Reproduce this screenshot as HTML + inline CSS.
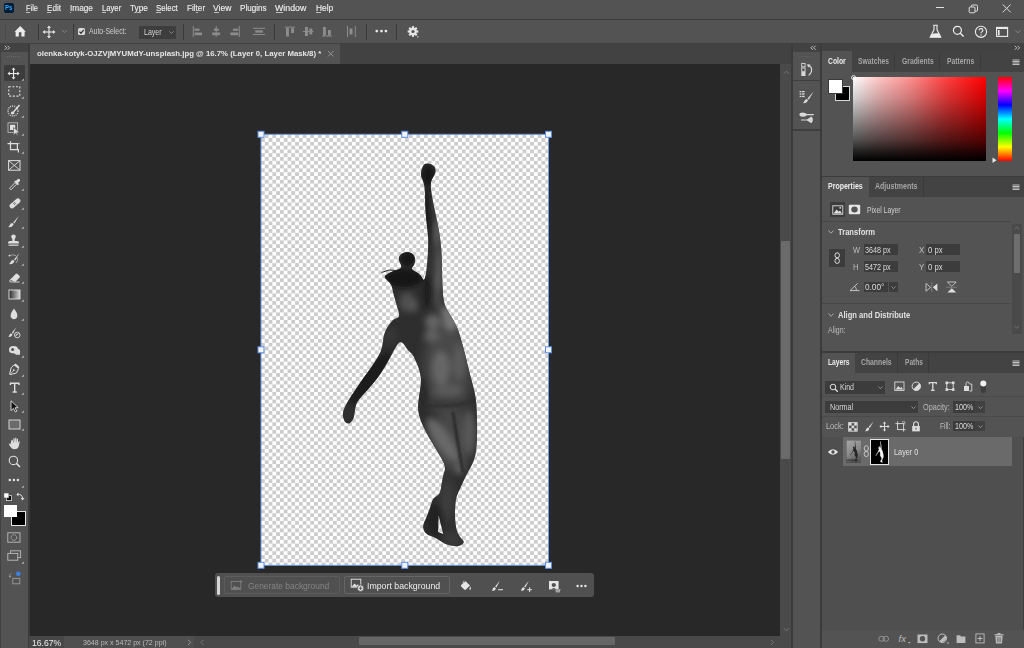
<!DOCTYPE html>
<html><head><meta charset="utf-8"><style>
html,body{margin:0;padding:0;}
body{width:1024px;height:648px;overflow:hidden;position:relative;background:#535353;font-family:"Liberation Sans",sans-serif;}
.a{position:absolute;}
.t{white-space:nowrap;}
</style></head><body>
<div class="a" style="left:0px;top:0px;width:1024px;height:19px;background:#535353;"></div>
<div class="a" style="left:0px;top:19px;width:1024px;height:1px;background:#3b3b3b;"></div>
<div class="a" style="left:0px;top:20px;width:1024px;height:23px;background:#535353;"></div>
<div class="a" style="left:0px;top:43px;width:1024px;height:605px;background:#424242;"></div>
<div class="a" style="left:0px;top:43px;width:28px;height:9px;background:#424242;"></div>
<div class="a" style="left:1px;top:52px;width:27px;height:596px;background:#535353;"></div>
<div class="a" style="left:28px;top:43px;width:2px;height:605px;background:#3b3b3b;"></div>
<div class="a" style="left:30px;top:43px;width:762px;height:21px;background:#424242;"></div>
<div class="a" style="left:30px;top:44px;width:310px;height:20px;background:#535353;"></div>
<div class="a" style="left:30px;top:64px;width:750px;height:572px;background:#282828;"></div>
<div class="a" style="left:780px;top:64px;width:11.3px;height:584px;background:#4a4a4a;"></div>
<div class="a" style="left:30px;top:636px;width:750px;height:12px;background:#474747;"></div>
<div class="a" style="left:791px;top:43px;width:2px;height:605px;background:#3b3b3b;"></div>
<div class="a" style="left:793px;top:43px;width:27px;height:9px;background:#424242;"></div>
<div class="a" style="left:793px;top:52px;width:27px;height:596px;background:#535353;"></div>
<div class="a" style="left:820px;top:43px;width:2px;height:605px;background:#3b3b3b;"></div>
<div class="a" style="left:822px;top:43px;width:202px;height:8px;background:#424242;"></div>
<div class="a" style="left:4px;top:3px;width:10px;height:10px;background:#001e36;border-radius:2px;"></div>
<div class="a t" style="left:5.3px;top:5.10px;font-size:6.5px;line-height:6.5px;color:#31a8ff;font-weight:bold;transform:scaleX(0.9433);transform-origin:0 0;">Ps</div>
<div class="a t" style="left:25.5px;top:3.16px;font-size:9.5px;line-height:9.5px;color:#ececec;transform:scaleX(0.7839);transform-origin:0 0;-webkit-text-stroke:0.15px #ececec;">File</div>
<div class="a t" style="left:46.6px;top:3.16px;font-size:9.5px;line-height:9.5px;color:#ececec;transform:scaleX(0.8552);transform-origin:0 0;-webkit-text-stroke:0.15px #ececec;">Edit</div>
<div class="a t" style="left:69.7px;top:3.16px;font-size:9.5px;line-height:9.5px;color:#ececec;transform:scaleX(0.8673);transform-origin:0 0;-webkit-text-stroke:0.15px #ececec;">Image</div>
<div class="a t" style="left:101.6px;top:3.16px;font-size:9.5px;line-height:9.5px;color:#ececec;transform:scaleX(0.8079);transform-origin:0 0;-webkit-text-stroke:0.15px #ececec;">Layer</div>
<div class="a t" style="left:130px;top:3.16px;font-size:9.5px;line-height:9.5px;color:#ececec;transform:scaleX(0.8642);transform-origin:0 0;-webkit-text-stroke:0.15px #ececec;">Type</div>
<div class="a t" style="left:156px;top:3.16px;font-size:9.5px;line-height:9.5px;color:#ececec;transform:scaleX(0.8256);transform-origin:0 0;-webkit-text-stroke:0.15px #ececec;">Select</div>
<div class="a t" style="left:186.6px;top:3.16px;font-size:9.5px;line-height:9.5px;color:#ececec;transform:scaleX(0.8574);transform-origin:0 0;-webkit-text-stroke:0.15px #ececec;">Filter</div>
<div class="a t" style="left:213.3px;top:3.16px;font-size:9.5px;line-height:9.5px;color:#ececec;transform:scaleX(0.8962);transform-origin:0 0;-webkit-text-stroke:0.15px #ececec;">View</div>
<div class="a t" style="left:240.2px;top:3.16px;font-size:9.5px;line-height:9.5px;color:#ececec;transform:scaleX(0.8505);transform-origin:0 0;-webkit-text-stroke:0.15px #ececec;">Plugins</div>
<div class="a t" style="left:275.3px;top:3.16px;font-size:9.5px;line-height:9.5px;color:#ececec;transform:scaleX(0.9263);transform-origin:0 0;-webkit-text-stroke:0.15px #ececec;">Window</div>
<div class="a t" style="left:315.6px;top:3.16px;font-size:9.5px;line-height:9.5px;color:#ececec;transform:scaleX(0.8803);transform-origin:0 0;-webkit-text-stroke:0.15px #ececec;">Help</div>
<div class="a" style="left:25.8px;top:12.4px;width:4.2px;height:0.8px;background:#bdbdbd;"></div>
<div class="a" style="left:46.9px;top:12.4px;width:4.3px;height:0.8px;background:#bdbdbd;"></div>
<div class="a" style="left:69.9px;top:12.4px;width:1.6px;height:0.8px;background:#bdbdbd;"></div>
<div class="a" style="left:101.9px;top:12.4px;width:4.2px;height:0.8px;background:#bdbdbd;"></div>
<div class="a" style="left:136.5px;top:12.4px;width:4.3px;height:0.8px;background:#bdbdbd;"></div>
<div class="a" style="left:156.3px;top:12.4px;width:4.6px;height:0.8px;background:#bdbdbd;"></div>
<div class="a" style="left:195.6px;top:12.4px;width:2.8px;height:0.8px;background:#bdbdbd;"></div>
<div class="a" style="left:213.5px;top:12.4px;width:5.2px;height:0.8px;background:#bdbdbd;"></div>
<div class="a" style="left:275.5px;top:12.4px;width:7.6px;height:0.8px;background:#bdbdbd;"></div>
<div class="a" style="left:315.9px;top:12.4px;width:5px;height:0.8px;background:#bdbdbd;"></div>
<div class="a" style="left:4.5px;top:23px;width:1px;height:17px;background:#4a4a4a;"></div>
<div class="a" style="left:38.0px;top:23.5px;width:1px;height:16px;background:#3a3a3a;"></div>
<div class="a" style="left:72.5px;top:23.5px;width:1px;height:16px;background:#3a3a3a;"></div>
<div class="a" style="left:182.5px;top:23.5px;width:1px;height:16px;background:#3a3a3a;"></div>
<div class="a" style="left:274.2px;top:23.5px;width:1px;height:16px;background:#3a3a3a;"></div>
<div class="a" style="left:366.0px;top:23.5px;width:1px;height:16px;background:#3a3a3a;"></div>
<div class="a" style="left:396.0px;top:23.5px;width:1px;height:16px;background:#3a3a3a;"></div>
<svg class="a" style="left:13px;top:25px;" width="14" height="13" viewBox="0 0 14 13"><path d="M7.25 1 L1.6 6.7 L2.6 6.7 L2.6 11.4 L5.8 11.4 L5.8 7.3 L8.4 7.3 L8.4 11.4 L11.6 11.4 L11.6 6.7 L12.8 6.7 Z" fill="#ececec"/></svg>
<svg class="a" style="left:42px;top:24.5px;" width="14" height="14" viewBox="0 0 14 14"><g fill="#e2e2e2"><rect x="6.4" y="1.5" width="1.2" height="11"/><rect x="1.5" y="6.4" width="11" height="1.2"/><path d="M7 0.6 L9 3 L5 3Z M7 13.4 L9 11 L5 11Z M0.6 7 L3 5 L3 9Z M13.4 7 L11 5 L11 9Z"/></g></svg>
<svg class="a" style="left:62px;top:30px;" width="5" height="3" viewBox="0 0 5 3"><path d="M0.3 0.3 L2.5 2.5 L4.7 0.3" stroke="#8a8a8a" stroke-width="0.9" fill="none"/></svg>
<div class="a" style="left:78.4px;top:28px;width:7px;height:7px;background:#d9d9d9;border-radius:1.5px;"></div>
<svg class="a" style="left:78.4px;top:28px;" width="7" height="7" viewBox="0 0 7 7"><path d="M1.4 3.6 L3 5.2 L5.8 1.9" stroke="#333" stroke-width="1.3" fill="none"/></svg>
<div class="a t" style="left:89.3px;top:26.69px;font-size:8.4px;line-height:8.4px;color:#cfcfcf;transform:scaleX(0.8195);transform-origin:0 0;">Auto-Select:</div>
<div class="a" style="left:139px;top:26px;width:36.5px;height:12.5px;background:#3d3d3d;border-radius:1px;"></div>
<div class="a t" style="left:143.8px;top:27.80px;font-size:8.5px;line-height:8.5px;color:#d6d6d6;transform:scaleX(0.8277);transform-origin:0 0;">Layer</div>
<svg class="a" style="left:169px;top:31px;" width="5" height="3" viewBox="0 0 5 3"><path d="M0.3 0.3 L2.5 2.5 L4.7 0.3" stroke="#8a8a8a" stroke-width="0.9" fill="none"/></svg>
<svg class="a" style="left:192px;top:25px;" width="12" height="13" viewBox="0 0 12 13"><g fill="#8c8c8c"><rect x="0.8" y="1" width="1" height="11"/><rect x="2.5" y="3.6" width="5" height="2.2"/><rect x="2.5" y="7.5" width="7.6" height="2.7"/></g></svg>
<svg class="a" style="left:211px;top:25px;" width="10" height="13" viewBox="0 0 10 13"><g fill="#8c8c8c"><rect x="4.7" y="1" width="1" height="11"/><rect x="3" y="3.6" width="4.8" height="2.2"/><rect x="1.2" y="7.5" width="7.9" height="2.7"/></g></svg>
<svg class="a" style="left:229px;top:25px;" width="12" height="13" viewBox="0 0 12 13"><g fill="#8c8c8c"><rect x="9.8" y="1" width="1" height="11"/><rect x="3.9" y="3.6" width="5.4" height="2.2"/><rect x="1.3" y="7.5" width="8" height="2.7"/></g></svg>
<svg class="a" style="left:252px;top:25px;" width="14" height="13" viewBox="0 0 14 13"><g fill="#8c8c8c"><rect x="1" y="2.8" width="12" height="1"/><rect x="1" y="9" width="12" height="1"/><rect x="3.3" y="5.3" width="7.5" height="2.4"/></g></svg>
<svg class="a" style="left:284px;top:25px;" width="12" height="13" viewBox="0 0 12 13"><g fill="#8c8c8c"><rect x="1" y="1.6" width="10" height="1"/><rect x="2" y="3" width="2.9" height="8.5"/><rect x="7.1" y="3" width="2.9" height="5"/></g></svg>
<svg class="a" style="left:302px;top:25px;" width="12" height="13" viewBox="0 0 12 13"><g fill="#8c8c8c"><rect x="1" y="6" width="10.5" height="1"/><rect x="3" y="2" width="2.9" height="9"/><rect x="7.4" y="3.5" width="2.9" height="6"/></g></svg>
<svg class="a" style="left:321px;top:25px;" width="12" height="13" viewBox="0 0 12 13"><g fill="#8c8c8c"><rect x="1" y="10.5" width="10" height="1"/><rect x="2" y="2" width="2.9" height="8.5"/><rect x="7" y="5" width="2.9" height="5.5"/></g></svg>
<svg class="a" style="left:346px;top:25px;" width="10" height="13" viewBox="0 0 10 13"><g fill="#8c8c8c"><rect x="1" y="1" width="1" height="11"/><rect x="8.8" y="1" width="1" height="11"/><rect x="3.5" y="3.5" width="3" height="6"/></g></svg>
<svg class="a" style="left:374px;top:29px;" width="14" height="4" viewBox="0 0 14 4"><g fill="#e6e6e6"><circle cx="2.8" cy="2.1" r="1.4"/><circle cx="7.5" cy="2.1" r="1.4"/><circle cx="11.9" cy="2.1" r="1.4"/></g></svg>
<svg class="a" style="left:405.7px;top:24.6px;" width="14" height="13" viewBox="0 0 14 13"><g fill="#e6e6e6" transform="translate(7 6.5)"><rect x="-1.1" y="-5.3" width="2.2" height="2.6" transform="rotate(0)"/><rect x="-1.1" y="-5.3" width="2.2" height="2.6" transform="rotate(45)"/><rect x="-1.1" y="-5.3" width="2.2" height="2.6" transform="rotate(90)"/><rect x="-1.1" y="-5.3" width="2.2" height="2.6" transform="rotate(135)"/><rect x="-1.1" y="-5.3" width="2.2" height="2.6" transform="rotate(180)"/><rect x="-1.1" y="-5.3" width="2.2" height="2.6" transform="rotate(225)"/><rect x="-1.1" y="-5.3" width="2.2" height="2.6" transform="rotate(270)"/><rect x="-1.1" y="-5.3" width="2.2" height="2.6" transform="rotate(315)"/><circle r="3.7"/><circle r="1.6" fill="#535353"/></g><path d="M10.6 11.6 L13 11.6 L11.8 12.8Z" fill="#e6e6e6"/></svg>
<svg class="a" style="left:929px;top:24px;" width="13" height="15" viewBox="0 0 13 15"><path d="M4.2 1.2 H8.8 M5 1.2 V5.8 L1.2 13.2 H11.8 L8 5.8 V1.2" stroke="#ececec" stroke-width="1.1" fill="none"/><path d="M2.6 10.4 Q6 8.6 10.2 9.6 L11.8 13.2 H1.2Z" fill="#ececec"/></svg>
<svg class="a" style="left:952px;top:25px;" width="13" height="13" viewBox="0 0 13 13"><circle cx="5.4" cy="5.3" r="4" stroke="#ececec" stroke-width="1.2" fill="none"/><path d="M8.3 8.3 L11.6 11.6" stroke="#ececec" stroke-width="1.4"/></svg>
<svg class="a" style="left:974px;top:24.5px;" width="14" height="14" viewBox="0 0 14 14"><circle cx="7" cy="6.8" r="5.6" stroke="#ececec" stroke-width="1.1" fill="none"/><path d="M5.1 5.3 Q5.1 3.6 7 3.6 Q8.9 3.6 8.9 5.2 Q8.9 6.3 7.6 6.9 Q7 7.3 7 8.3" stroke="#ececec" stroke-width="1.1" fill="none"/><circle cx="7" cy="10" r="0.7" fill="#ececec"/></svg>
<svg class="a" style="left:995px;top:26px;" width="14" height="12" viewBox="0 0 14 12"><rect x="1.6" y="1.4" width="11" height="9" stroke="#ececec" stroke-width="1.1" fill="none"/><rect x="1.6" y="1.4" width="11" height="1.6" fill="#ececec"/><rect x="3" y="4" width="1.6" height="5.4" fill="#ececec"/></svg>
<svg class="a" style="left:1015px;top:30px;" width="6" height="3.5" viewBox="0 0 6 3.5"><path d="M0.5 0.5 L3 2.8 L5.5 0.5" stroke="#8a8a8a" stroke-width="0.9" fill="none"/></svg>
<div class="a" style="left:936.3px;top:7.4px;width:8px;height:1px;background:#e0e0e0;"></div>
<svg class="a" style="left:968px;top:3.5px;" width="11" height="10" viewBox="0 0 11 10"><rect x="1.2" y="3" width="5.8" height="5.8" rx="1" stroke="#e0e0e0" stroke-width="1" fill="none"/><path d="M3.2 2.9 V2.3 Q3.2 1 4.5 1 H8.2 Q9.5 1 9.5 2.3 V6 Q9.5 7.3 8.2 7.3 H7.1" stroke="#e0e0e0" stroke-width="1" fill="none"/></svg>
<svg class="a" style="left:1002px;top:3.5px;" width="10" height="9" viewBox="0 0 10 9"><path d="M0.8 0.5 L8.6 8.3 M8.6 0.5 L0.8 8.3" stroke="#e0e0e0" stroke-width="1"/></svg>
<svg class="a" style="left:4px;top:44.5px;" width="7" height="6" viewBox="0 0 7 6"><path d="M0.8 0.8 L2.8 2.8 L0.8 4.8 M3.6 0.8 L5.6 2.8 L3.6 4.8" stroke="#cfcfcf" stroke-width="0.9" fill="none"/></svg>
<div class="a" style="left:6.5px;top:55.7px;width:14px;height:1px;background:repeating-linear-gradient(90deg,#6a6a6a 0 1px,transparent 1px 2px);"></div>
<div class="a" style="left:3.7px;top:65.2px;width:21px;height:16.3px;background:#3c3c3c;border-radius:1px;"></div>
<svg class="a" style="left:7px;top:66.5px;" width="13" height="13" viewBox="0 0 13 13"><g fill="#e8e8e8"><rect x="6" y="1.6" width="1.1" height="10"/><rect x="1.6" y="6" width="10" height="1.1"/><path d="M6.55 0.5 L8.5 2.8 L4.6 2.8Z M6.55 12.6 L8.5 10.3 L4.6 10.3Z M0.5 6.55 L2.8 4.6 L2.8 8.5Z M12.6 6.55 L10.3 4.6 L10.3 8.5Z"/></g></svg>
<svg class="a" style="left:21.0px;top:78.0px;" width="3" height="3" viewBox="0 0 3 3"><path d="M2.8 0.4 L2.8 2.8 L0.4 2.8Z" fill="#bdbdbd"/></svg>
<svg class="a" style="left:7.5px;top:86px;" width="13" height="11" viewBox="0 0 13 11"><rect x="0.8" y="0.8" width="11" height="9.3" stroke="#dedede" stroke-width="1.1" stroke-dasharray="2 1.6" fill="none"/></svg>
<svg class="a" style="left:20.5px;top:96.0px;" width="3" height="3" viewBox="0 0 3 3"><path d="M2.8 0.4 L2.8 2.8 L0.4 2.8Z" fill="#bdbdbd"/></svg>
<svg class="a" style="left:7px;top:103.5px;" width="14" height="14" viewBox="0 0 14 14"><circle cx="6" cy="7" r="5" stroke="#dedede" stroke-width="1.3" stroke-dasharray="1 1" fill="none"/><path d="M12.5 1 L6.5 8" stroke="#dedede" stroke-width="1.4"/><ellipse cx="5.6" cy="9" rx="1.8" ry="1.4" fill="#dedede"/></svg>
<svg class="a" style="left:20.5px;top:114.5px;" width="3" height="3" viewBox="0 0 3 3"><path d="M2.8 0.4 L2.8 2.8 L0.4 2.8Z" fill="#bdbdbd"/></svg>
<svg class="a" style="left:7px;top:122px;" width="14" height="14" viewBox="0 0 14 14"><rect x="1" y="0.8" width="9.6" height="9.6" stroke="#dedede" stroke-width="0.8" fill="none" opacity="0.8"/><rect x="3" y="2.8" width="5.2" height="5.2" fill="#dedede"/><path d="M6.5 5.5 L6.5 13 L8.6 11.2 L10.2 13.5 L11 13 L9.6 10.8 L12.6 10.6Z" fill="#dedede" stroke="#535353" stroke-width="0.6"/></svg>
<svg class="a" style="left:20.5px;top:133.0px;" width="3" height="3" viewBox="0 0 3 3"><path d="M2.8 0.4 L2.8 2.8 L0.4 2.8Z" fill="#bdbdbd"/></svg>
<svg class="a" style="left:6.5px;top:140.5px;" width="14" height="12" viewBox="0 0 14 12"><path d="M0.5 2.6 H3.5 M3.5 0.3 V8.6 H11.4 V11.6 M3.5 2.6 H10.4 V8.6" stroke="#dedede" stroke-width="1.2" fill="none"/><path d="M10.4 2.6 H13" stroke="#dedede" stroke-width="0.6"/></svg>
<svg class="a" style="left:20.5px;top:151.0px;" width="3" height="3" viewBox="0 0 3 3"><path d="M2.8 0.4 L2.8 2.8 L0.4 2.8Z" fill="#bdbdbd"/></svg>
<svg class="a" style="left:8px;top:160px;" width="13" height="11" viewBox="0 0 13 11"><rect x="0.6" y="0.6" width="11.4" height="9.6" stroke="#dedede" stroke-width="1" fill="none"/><path d="M0.6 0.6 L12 10.2 M12 0.6 L0.6 10.2" stroke="#dedede" stroke-width="0.9"/></svg>
<svg class="a" style="left:7.5px;top:178px;" width="13" height="13" viewBox="0 0 13 13"><path d="M2.2 11.2 L1.5 10.4 L7 4.6 L8.6 6.2 L3 11.8Z" stroke="#dedede" stroke-width="0.9" fill="none"/><path d="M6.2 3.6 L9.8 7.2 L11 6 L10 5 L12 3 Q12.5 1.5 11.2 1 Q10.2 0.6 9.6 1.2 L7.8 3 L7 2.6Z" fill="#dedede"/></svg>
<svg class="a" style="left:20.5px;top:188.0px;" width="3" height="3" viewBox="0 0 3 3"><path d="M2.8 0.4 L2.8 2.8 L0.4 2.8Z" fill="#bdbdbd"/></svg>
<svg class="a" style="left:7.5px;top:196.5px;" width="13" height="12" viewBox="0 0 13 12"><rect x="-2.2" y="-1.9" width="12.6" height="5" rx="2.5" transform="translate(6.5 6) rotate(-40) translate(-4 0)" fill="#dedede"/><path d="M5.8 4.7 L8 7.2 M4.8 5.6 L7 8.1" stroke="#535353" stroke-width="0.7"/></svg>
<svg class="a" style="left:20.5px;top:206.5px;" width="3" height="3" viewBox="0 0 3 3"><path d="M2.8 0.4 L2.8 2.8 L0.4 2.8Z" fill="#bdbdbd"/></svg>
<svg class="a" style="left:7px;top:215px;" width="13" height="13" viewBox="0 0 13 13"><path d="M11.8 1 L6.2 7.4 L7.4 8.6Z" fill="#dedede"/><path d="M5.4 8 Q3.4 8.2 2.8 10 Q2.4 11.4 1 12 Q4.6 12.6 6 10.6 Q6.8 9.4 6.3 8.8Z" fill="#dedede"/></svg>
<svg class="a" style="left:20.5px;top:226.0px;" width="3" height="3" viewBox="0 0 3 3"><path d="M2.8 0.4 L2.8 2.8 L0.4 2.8Z" fill="#bdbdbd"/></svg>
<svg class="a" style="left:7px;top:233.5px;" width="13" height="13" viewBox="0 0 13 13"><circle cx="6.5" cy="2.8" r="2.3" fill="#dedede"/><rect x="5.3" y="4" width="2.4" height="3.2" fill="#dedede"/><path d="M1 8.6 Q1 7 3 7 H10 Q12 7 12 8.6 V9.6 H1Z" fill="#dedede"/><rect x="1.6" y="10.4" width="9.8" height="1.6" fill="#dedede" opacity="0.75"/></svg>
<svg class="a" style="left:20.5px;top:244.5px;" width="3" height="3" viewBox="0 0 3 3"><path d="M2.8 0.4 L2.8 2.8 L0.4 2.8Z" fill="#bdbdbd"/></svg>
<svg class="a" style="left:6.5px;top:252px;" width="14" height="13" viewBox="0 0 14 13"><path d="M12.4 1 L7 7.4 L8.2 8.6Z" fill="#dedede"/><path d="M6.2 8 Q4.2 8.2 3.6 10 Q3.2 11.4 1.8 12 Q5.4 12.6 6.8 10.6 Q7.6 9.4 7.1 8.8Z" fill="#dedede"/><path d="M1 4 L3 2.6 L3.2 4.6Z" fill="#dedede"/><path d="M2.6 3.6 Q5.6 2 9 3.6 M10.4 5.8 Q11 9 9 11" stroke="#dedede" stroke-width="0.7" fill="none" opacity="0.8"/></svg>
<svg class="a" style="left:20.5px;top:262.5px;" width="3" height="3" viewBox="0 0 3 3"><path d="M2.8 0.4 L2.8 2.8 L0.4 2.8Z" fill="#bdbdbd"/></svg>
<svg class="a" style="left:7.5px;top:271.5px;" width="13" height="11" viewBox="0 0 13 11"><path d="M2.2 7.8 L7.6 2 Q8.6 1 9.6 2 L11.4 3.8 Q12.4 4.8 11.4 5.8 L7.2 10" fill="#dedede"/><path d="M7.4 4.6 L2 8.2 Q1 9 2 9.8 L4.2 10 H11.6" stroke="#dedede" stroke-width="0.9" fill="none"/></svg>
<svg class="a" style="left:20.5px;top:280.5px;" width="3" height="3" viewBox="0 0 3 3"><path d="M2.8 0.4 L2.8 2.8 L0.4 2.8Z" fill="#bdbdbd"/></svg>
<svg class="a" style="left:7.5px;top:289px;" width="13" height="11" viewBox="0 0 13 11"><defs><linearGradient id="gr1" x1="0" x2="1" y1="0" y2="0"><stop offset="0" stop-color="#2a2a2a"/><stop offset="1" stop-color="#d8d8d8"/></linearGradient></defs><rect x="1" y="1" width="11" height="9" fill="url(#gr1)" stroke="#e0e0e0" stroke-width="0.9"/></svg>
<svg class="a" style="left:20.5px;top:298.5px;" width="3" height="3" viewBox="0 0 3 3"><path d="M2.8 0.4 L2.8 2.8 L0.4 2.8Z" fill="#bdbdbd"/></svg>
<svg class="a" style="left:9px;top:307.5px;" width="10" height="12" viewBox="0 0 10 12"><path d="M5 0.5 Q7.4 3.8 8.2 6 Q9 9 7 10.6 Q5 11.8 3 10.6 Q1 9 1.8 6 Q2.6 3.8 5 0.5Z" fill="#dedede"/></svg>
<svg class="a" style="left:20.5px;top:317.5px;" width="3" height="3" viewBox="0 0 3 3"><path d="M2.8 0.4 L2.8 2.8 L0.4 2.8Z" fill="#bdbdbd"/></svg>
<svg class="a" style="left:7.5px;top:325.5px;" width="13" height="13" viewBox="0 0 13 13"><path d="M8.4 1 L3.8 6.8 L5 7.8Z" fill="#dedede"/><path d="M3.2 7.4 Q1.8 7.6 1.4 9 Q1.2 10.2 0.4 10.8 Q3 11.2 4 9.6 Q4.6 8.6 4.2 8.1Z" fill="#dedede"/><circle cx="9.2" cy="9" r="2.8" stroke="#dedede" stroke-width="0.9" fill="none"/><path d="M7.4 10.4 L11 7.6 A2.8 2.8 0 0 0 7.4 10.4Z" fill="#dedede"/></svg>
<svg class="a" style="left:7.5px;top:344.5px;" width="13" height="11" viewBox="0 0 13 11"><path d="M1 4.5 Q1 1 5.5 1 Q9.6 1 10.2 4 L12 5 L12 9.8 L8 9.8 Q7 8 5 8.3 Q1 8.6 1 4.5Z" fill="#dedede"/><circle cx="4.6" cy="4.6" r="1.5" fill="#535353"/></svg>
<svg class="a" style="left:20.5px;top:354.5px;" width="3" height="3" viewBox="0 0 3 3"><path d="M2.8 0.4 L2.8 2.8 L0.4 2.8Z" fill="#bdbdbd"/></svg>
<svg class="a" style="left:8px;top:363px;" width="12" height="13" viewBox="0 0 12 13"><path d="M6 1.8 L10.6 5.6 L8.4 10 L2.2 11.6 L1.6 11 L3.2 4.8Z" stroke="#dedede" stroke-width="1" fill="none"/><path d="M7.6 0.6 L11.4 4 L10.6 5.6 L6 1.8Z" fill="#dedede"/><circle cx="5.8" cy="7.2" r="0.9" fill="#dedede"/><path d="M2 11.4 L5.2 8" stroke="#dedede" stroke-width="0.7"/></svg>
<svg class="a" style="left:20.5px;top:373.5px;" width="3" height="3" viewBox="0 0 3 3"><path d="M2.8 0.4 L2.8 2.8 L0.4 2.8Z" fill="#bdbdbd"/></svg>
<svg class="a" style="left:8.5px;top:382px;" width="11" height="11" viewBox="0 0 11 11"><path d="M1 1.2 H10.4 M1.4 1 V3 M10 1 V3 M5.7 1.2 V10 M3.6 10 H7.8" stroke="#dedede" stroke-width="1.4" fill="none"/></svg>
<svg class="a" style="left:20.5px;top:391.5px;" width="3" height="3" viewBox="0 0 3 3"><path d="M2.8 0.4 L2.8 2.8 L0.4 2.8Z" fill="#bdbdbd"/></svg>
<svg class="a" style="left:10px;top:399.5px;" width="9" height="13" viewBox="0 0 9 13"><path d="M1 0.8 L1 10.6 L3.4 8.4 L5.4 12 L6.8 11.3 L5 7.8 L8.2 7.6Z" fill="#111" stroke="#e0e0e0" stroke-width="0.9"/></svg>
<svg class="a" style="left:20.5px;top:410.0px;" width="3" height="3" viewBox="0 0 3 3"><path d="M2.8 0.4 L2.8 2.8 L0.4 2.8Z" fill="#bdbdbd"/></svg>
<svg class="a" style="left:7.5px;top:418.5px;" width="13" height="11" viewBox="0 0 13 11"><rect x="1" y="1" width="11" height="9" fill="#6a6a6a" stroke="#e0e0e0" stroke-width="0.9"/></svg>
<svg class="a" style="left:20.5px;top:428.0px;" width="3" height="3" viewBox="0 0 3 3"><path d="M2.8 0.4 L2.8 2.8 L0.4 2.8Z" fill="#bdbdbd"/></svg>
<svg class="a" style="left:7.5px;top:436.5px;" width="13" height="13" viewBox="0 0 13 13"><path d="M2.4 7.4 Q1.2 6 0.8 6.8 Q0.8 7.6 2.6 10 Q4 12.2 6.4 12.2 Q10 12.2 10.8 9 L11.8 4.6 Q11.6 3.8 10.8 4.2 L10 6.4 L10 2 Q9.6 1.2 9 2 L8.6 6 L8.4 1 Q7.8 0.2 7.2 1 L7 5.8 L6.6 1.6 Q6 0.8 5.4 1.6 L5.4 6.8 L4.6 3 Q4 2.4 3.5 3 Z" fill="#dedede"/></svg>
<svg class="a" style="left:7.5px;top:455px;" width="13" height="13" viewBox="0 0 13 13"><circle cx="5.4" cy="5.4" r="4.2" stroke="#dedede" stroke-width="1.1" fill="none"/><path d="M8.4 8.4 L12 12" stroke="#dedede" stroke-width="1.5"/></svg>
<svg class="a" style="left:7.5px;top:478px;" width="13" height="4" viewBox="0 0 13 4"><g fill="#dedede"><circle cx="1.8" cy="2" r="1.3"/><circle cx="5.9" cy="2" r="1.3"/><circle cx="9.9" cy="2" r="1.3"/></g></svg>
<svg class="a" style="left:20.5px;top:484.5px;" width="3" height="3" viewBox="0 0 3 3"><path d="M2.8 0.4 L2.8 2.8 L0.4 2.8Z" fill="#bdbdbd"/></svg>
<svg class="a" style="left:2.5px;top:491.5px;" width="9" height="10" viewBox="0 0 9 10"><rect x="3.4" y="3.6" width="5" height="5" fill="#000" stroke="#e0e0e0" stroke-width="0.8"/><rect x="0.9" y="1" width="5" height="5" fill="#fff" stroke="#535353" stroke-width="0.6"/></svg>
<svg class="a" style="left:15.5px;top:492px;" width="9" height="9" viewBox="0 0 9 9"><path d="M1.5 2.5 Q6 1.6 6.6 6.4" stroke="#dedede" stroke-width="1" fill="none"/><path d="M0.4 2.5 L2.4 0.6 L2.4 4.4Z M6.6 8.6 L4.7 6 L8.5 6Z" fill="#dedede"/></svg>
<div class="a" style="left:12px;top:512px;width:12.5px;height:12.5px;background:#000;box-shadow:0 0 0 1px #e6e6e6;"></div>
<div class="a" style="left:4px;top:504.6px;width:13px;height:12.6px;background:#fff;"></div>
<svg class="a" style="left:6.5px;top:532px;" width="14" height="11" viewBox="0 0 14 11"><rect x="0.8" y="0.8" width="12.2" height="9.4" stroke="#bdbdbd" stroke-width="0.9" fill="none"/><circle cx="6.9" cy="5.5" r="2.8" stroke="#bdbdbd" stroke-width="0.9" fill="none" stroke-dasharray="1.5 0.8"/></svg>
<svg class="a" style="left:6.5px;top:550px;" width="15" height="12" viewBox="0 0 15 12"><rect x="3.6" y="0.8" width="10" height="6.8" stroke="#bdbdbd" stroke-width="0.9" fill="#535353"/><rect x="0.8" y="3.4" width="10" height="6.8" stroke="#bdbdbd" stroke-width="0.9" fill="#535353"/></svg>
<svg class="a" style="left:20.5px;top:560.5px;" width="3" height="3" viewBox="0 0 3 3"><path d="M2.8 0.4 L2.8 2.8 L0.4 2.8Z" fill="#bdbdbd"/></svg>
<svg class="a" style="left:6.5px;top:571px;" width="15" height="14" viewBox="0 0 15 14"><path d="M3 6 Q2 3.4 4.2 2.4" stroke="#9a9a9a" stroke-width="0.9" fill="none"/><path d="M1.6 5 L3 6.8 L4.4 5Z" fill="#9a9a9a"/><rect x="5.8" y="7.4" width="7" height="5.4" stroke="#9a9a9a" stroke-width="0.9" fill="none"/><circle cx="11.3" cy="2.8" r="2.3" fill="#3b82e0"/></svg>
<div class="a t" style="left:37.4px;top:49.77px;font-size:7.6px;line-height:7.6px;color:#e6e6e6;font-weight:bold;transform:scaleX(1.0275);transform-origin:0 0;">olenka-kotyk-OJZVjMYUMdY-unsplash.jpg @ 16.7% (Layer 0, Layer Mask/8) *</div>
<svg class="a" style="left:326.5px;top:49.5px;" width="8" height="8" viewBox="0 0 8 8"><path d="M1 1 L6.5 6.5 M6.5 1 L1 6.5" stroke="#9a9a9a" stroke-width="0.9"/></svg>
<svg class="a" style="left:0;top:0" width="1024" height="648" viewBox="0 0 1024 648"><defs>
<pattern id="chk" x="261" y="134.3" width="7.5800" height="7.5800" patternUnits="userSpaceOnUse">
<rect width="7.5800" height="7.5800" fill="#ffffff"/><rect x="3.7900" width="3.7900" height="3.7900" fill="#cccccc"/><rect y="3.7900" width="3.7900" height="3.7900" fill="#cccccc"/>
</pattern>
<clipPath id="figclip"><path d="M425.4 163.8 Q428.1 162.7 431.6 164.6 Q435.1 166.6 435.5 169.3 Q435.9 172.0 434.7 174.3 Q433.5 176.6 432.0 179.3 Q430.5 182.0 430.9 187.8 Q431.4 193.6 433.4 203.6 Q435.5 213.6 437.0 220.6 Q438.5 227.5 439.6 234.4 Q440.7 241.4 441.2 248.2 Q441.8 255.0 442.0 269.3 Q442.2 283.6 442.9 293.6 Q443.7 303.7 446.4 308.4 Q449.1 313.0 452.4 318.5 Q455.6 324.0 457.5 328.6 Q459.3 333.3 461.1 339.8 Q463.0 346.3 464.9 353.7 Q466.7 361.1 468.5 368.5 Q470.4 375.9 472.2 382.4 Q474.0 388.9 474.9 393.5 Q475.9 398.1 476.4 404.6 Q476.9 411.1 477.0 418.2 Q477.1 425.4 477.1 433.1 Q477.1 440.9 476.4 448.6 Q475.6 456.3 473.6 461.0 Q471.7 465.6 468.6 471.0 Q465.6 476.4 463.2 481.8 Q460.9 487.2 458.6 491.8 Q456.3 496.4 455.8 500.4 Q455.3 504.3 455.1 508.9 Q454.8 513.5 455.2 519.5 Q455.7 525.6 456.6 529.8 Q457.6 533.9 459.5 536.2 Q461.3 538.5 462.7 539.9 Q464.1 541.3 463.6 542.7 Q463.1 544.1 460.8 545.2 Q458.5 546.4 455.2 546.1 Q452.0 545.9 448.8 545.0 Q445.6 544.1 442.4 542.2 Q439.1 540.4 436.3 538.5 Q433.5 536.7 430.2 535.8 Q427.0 534.8 425.1 532.5 Q423.3 530.2 423.1 527.4 Q422.9 524.6 424.5 521.4 Q426.1 518.1 428.0 513.5 Q429.8 508.9 431.2 503.8 Q432.6 498.7 434.9 497.3 Q437.2 495.9 438.6 494.6 Q440.1 493.3 440.9 488.7 Q441.6 484.1 442.4 479.5 Q443.2 474.8 444.4 471.7 Q445.5 468.6 444.4 464.8 Q443.2 460.9 438.9 453.9 Q434.7 447.0 430.0 439.3 Q425.4 431.6 422.7 425.5 Q420.0 419.3 418.9 414.6 Q417.7 410.0 418.1 405.0 Q418.5 400.0 419.4 394.4 Q420.4 388.9 420.9 383.4 Q421.3 377.8 419.9 372.4 Q418.5 367.0 416.6 363.1 Q414.8 359.3 413.6 356.6 Q412.5 354.0 409.9 352.0 Q407.4 350.0 405.5 346.7 Q403.6 343.4 401.9 342.5 Q400.1 341.6 398.4 343.4 Q396.6 345.2 393.9 350.5 Q391.2 355.8 387.6 362.0 Q384.1 368.2 380.6 373.5 Q377.0 378.9 371.7 385.1 Q366.4 391.3 361.5 396.6 Q356.6 401.9 355.8 406.4 Q354.9 410.8 354.4 414.4 Q354.0 417.9 352.6 420.1 Q351.3 422.3 349.6 423.2 Q347.8 424.1 346.0 422.8 Q344.2 421.5 343.3 417.9 Q342.4 414.4 343.3 410.9 Q344.2 407.3 346.9 402.9 Q349.5 398.4 352.6 393.9 Q355.7 389.5 359.2 384.2 Q362.8 378.9 366.8 373.5 Q370.8 368.2 374.8 362.0 Q378.8 355.8 380.6 351.4 Q382.4 346.9 382.8 342.5 Q383.2 338.1 384.5 333.6 Q385.9 329.2 388.5 325.6 Q391.2 322.1 392.4 320.6 Q393.5 319.1 396.8 318.1 Q400.0 317.0 398.9 313.1 Q397.8 309.3 396.6 305.0 Q395.3 300.6 394.1 296.3 Q392.8 292.0 392.2 288.3 Q391.6 284.6 389.8 282.7 Q387.9 280.8 385.7 278.7 Q383.5 276.6 386.3 274.7 Q389.1 272.8 392.2 271.6 Q395.3 270.3 399.0 269.1 Q402.7 267.9 400.4 263.7 Q398.0 259.5 399.2 256.6 Q400.5 253.8 403.5 252.7 Q406.5 251.5 409.5 252.2 Q412.5 253.0 414.0 255.5 Q415.5 258.0 415.0 261.5 Q414.5 265.0 412.6 267.1 Q410.8 269.1 413.6 270.4 Q416.3 271.6 418.8 273.8 Q421.3 275.9 422.5 278.4 Q423.7 280.8 424.6 279.0 Q425.6 277.1 426.6 268.8 Q427.5 260.4 427.9 252.7 Q428.3 245.0 428.2 240.1 Q428.1 235.2 427.0 225.9 Q425.8 216.7 425.4 209.0 Q425.0 201.3 425.0 194.8 Q425.0 188.2 423.9 183.9 Q422.7 179.7 421.5 177.3 Q420.4 175.0 421.5 170.0 Q422.7 165.0 425.4 163.8Z"/></clipPath>
<filter id="bl6" x="-50%" y="-50%" width="200%" height="200%"><feGaussianBlur stdDeviation="6"/></filter>
<filter id="bl4" x="-50%" y="-50%" width="200%" height="200%"><feGaussianBlur stdDeviation="4"/></filter>
<filter id="bl1" x="-50%" y="-50%" width="200%" height="200%"><feGaussianBlur stdDeviation="1"/></filter>
<filter id="bl3" x="-50%" y="-50%" width="200%" height="200%"><feGaussianBlur stdDeviation="3"/></filter>
<filter id="bl2" x="-50%" y="-50%" width="200%" height="200%"><feGaussianBlur stdDeviation="2"/></filter>
</defs>
<rect x="261" y="134.3" width="287.5" height="430.99999999999994" fill="url(#chk)"/>
<path d="M425.4 163.8 Q428.1 162.7 431.6 164.6 Q435.1 166.6 435.5 169.3 Q435.9 172.0 434.7 174.3 Q433.5 176.6 432.0 179.3 Q430.5 182.0 430.9 187.8 Q431.4 193.6 433.4 203.6 Q435.5 213.6 437.0 220.6 Q438.5 227.5 439.6 234.4 Q440.7 241.4 441.2 248.2 Q441.8 255.0 442.0 269.3 Q442.2 283.6 442.9 293.6 Q443.7 303.7 446.4 308.4 Q449.1 313.0 452.4 318.5 Q455.6 324.0 457.5 328.6 Q459.3 333.3 461.1 339.8 Q463.0 346.3 464.9 353.7 Q466.7 361.1 468.5 368.5 Q470.4 375.9 472.2 382.4 Q474.0 388.9 474.9 393.5 Q475.9 398.1 476.4 404.6 Q476.9 411.1 477.0 418.2 Q477.1 425.4 477.1 433.1 Q477.1 440.9 476.4 448.6 Q475.6 456.3 473.6 461.0 Q471.7 465.6 468.6 471.0 Q465.6 476.4 463.2 481.8 Q460.9 487.2 458.6 491.8 Q456.3 496.4 455.8 500.4 Q455.3 504.3 455.1 508.9 Q454.8 513.5 455.2 519.5 Q455.7 525.6 456.6 529.8 Q457.6 533.9 459.5 536.2 Q461.3 538.5 462.7 539.9 Q464.1 541.3 463.6 542.7 Q463.1 544.1 460.8 545.2 Q458.5 546.4 455.2 546.1 Q452.0 545.9 448.8 545.0 Q445.6 544.1 442.4 542.2 Q439.1 540.4 436.3 538.5 Q433.5 536.7 430.2 535.8 Q427.0 534.8 425.1 532.5 Q423.3 530.2 423.1 527.4 Q422.9 524.6 424.5 521.4 Q426.1 518.1 428.0 513.5 Q429.8 508.9 431.2 503.8 Q432.6 498.7 434.9 497.3 Q437.2 495.9 438.6 494.6 Q440.1 493.3 440.9 488.7 Q441.6 484.1 442.4 479.5 Q443.2 474.8 444.4 471.7 Q445.5 468.6 444.4 464.8 Q443.2 460.9 438.9 453.9 Q434.7 447.0 430.0 439.3 Q425.4 431.6 422.7 425.5 Q420.0 419.3 418.9 414.6 Q417.7 410.0 418.1 405.0 Q418.5 400.0 419.4 394.4 Q420.4 388.9 420.9 383.4 Q421.3 377.8 419.9 372.4 Q418.5 367.0 416.6 363.1 Q414.8 359.3 413.6 356.6 Q412.5 354.0 409.9 352.0 Q407.4 350.0 405.5 346.7 Q403.6 343.4 401.9 342.5 Q400.1 341.6 398.4 343.4 Q396.6 345.2 393.9 350.5 Q391.2 355.8 387.6 362.0 Q384.1 368.2 380.6 373.5 Q377.0 378.9 371.7 385.1 Q366.4 391.3 361.5 396.6 Q356.6 401.9 355.8 406.4 Q354.9 410.8 354.4 414.4 Q354.0 417.9 352.6 420.1 Q351.3 422.3 349.6 423.2 Q347.8 424.1 346.0 422.8 Q344.2 421.5 343.3 417.9 Q342.4 414.4 343.3 410.9 Q344.2 407.3 346.9 402.9 Q349.5 398.4 352.6 393.9 Q355.7 389.5 359.2 384.2 Q362.8 378.9 366.8 373.5 Q370.8 368.2 374.8 362.0 Q378.8 355.8 380.6 351.4 Q382.4 346.9 382.8 342.5 Q383.2 338.1 384.5 333.6 Q385.9 329.2 388.5 325.6 Q391.2 322.1 392.4 320.6 Q393.5 319.1 396.8 318.1 Q400.0 317.0 398.9 313.1 Q397.8 309.3 396.6 305.0 Q395.3 300.6 394.1 296.3 Q392.8 292.0 392.2 288.3 Q391.6 284.6 389.8 282.7 Q387.9 280.8 385.7 278.7 Q383.5 276.6 386.3 274.7 Q389.1 272.8 392.2 271.6 Q395.3 270.3 399.0 269.1 Q402.7 267.9 400.4 263.7 Q398.0 259.5 399.2 256.6 Q400.5 253.8 403.5 252.7 Q406.5 251.5 409.5 252.2 Q412.5 253.0 414.0 255.5 Q415.5 258.0 415.0 261.5 Q414.5 265.0 412.6 267.1 Q410.8 269.1 413.6 270.4 Q416.3 271.6 418.8 273.8 Q421.3 275.9 422.5 278.4 Q423.7 280.8 424.6 279.0 Q425.6 277.1 426.6 268.8 Q427.5 260.4 427.9 252.7 Q428.3 245.0 428.2 240.1 Q428.1 235.2 427.0 225.9 Q425.8 216.7 425.4 209.0 Q425.0 201.3 425.0 194.8 Q425.0 188.2 423.9 183.9 Q422.7 179.7 421.5 177.3 Q420.4 175.0 421.5 170.0 Q422.7 165.0 425.4 163.8Z" fill="#2e2e2e"/>
<g clip-path="url(#figclip)">
<g filter="url(#bl6)">
<ellipse cx="448" cy="368" rx="24" ry="48" fill="#4a4a4a"/>
<ellipse cx="452" cy="440" rx="22" ry="32" fill="#464646"/>
<ellipse cx="436" cy="280" rx="8" ry="30" fill="#363636"/>
</g>
<g filter="url(#bl3)">
<ellipse cx="451" cy="322" rx="8" ry="9" fill="#747474"/>
<ellipse cx="433" cy="322" rx="8" ry="8" fill="#646464"/>
<ellipse cx="432" cy="336" rx="8" ry="6" fill="#606060"/>
<ellipse cx="441" cy="368" rx="9" ry="17" fill="#666666"/>
<ellipse cx="459" cy="362" rx="6" ry="18" fill="#5c5c5c"/>
<ellipse cx="448" cy="390" rx="14" ry="6" fill="#5a5a5a"/>
<ellipse cx="447" cy="404" rx="30" ry="4" fill="#383838"/>
<ellipse cx="443" cy="440" rx="8" ry="26" fill="#686868" transform="rotate(-35 443 440)"/>
<ellipse cx="469" cy="432" rx="6" ry="22" fill="#585858"/>
<ellipse cx="459" cy="468" rx="5" ry="6" fill="#5e5e5e"/>
<ellipse cx="407" cy="302" rx="8" ry="10" fill="#505050"/>
<ellipse cx="414" cy="306" rx="3" ry="6" fill="#5e5e5e"/>
<ellipse cx="438" cy="290" rx="4" ry="20" fill="#4c4c4c"/>
<ellipse cx="437.5" cy="232" rx="3" ry="16" fill="#6a6a6a"/>
<ellipse cx="433" cy="205" rx="1.5" ry="10" fill="#505050"/>
<ellipse cx="424.5" cy="174" rx="1.5" ry="2.5" fill="#555"/>
<ellipse cx="439" cy="268" rx="2.5" ry="22" fill="#6a6a6a"/>
<ellipse cx="446" cy="312" rx="5" ry="6" fill="#7a7a7a"/>
<ellipse cx="452" cy="540" rx="6" ry="4" fill="#3e3e3e"/>
<ellipse cx="390" cy="335" rx="6" ry="8" fill="#383838"/>
</g>
<g filter="url(#bl4)">
<ellipse cx="447" cy="500" rx="8" ry="22" fill="#3c3c3c"/>
<ellipse cx="452" cy="538" rx="9" ry="6" fill="#3a3a3a"/>
</g>
<g filter="url(#bl1)">
<path d="M453 412 Q457 440 463 472" stroke="#222" stroke-width="2.2" fill="none"/>
<path d="M420 404 Q447 410 476 400" stroke="#2e2e2e" stroke-width="2" fill="none"/>
</g>
<g filter="url(#bl2)">
<ellipse cx="404" cy="278" rx="19" ry="9" fill="#161616"/>
<ellipse cx="427" cy="292" rx="3.5" ry="16" fill="#1c1c1c"/>
<ellipse cx="407.5" cy="259" rx="7" ry="7" fill="#121212"/>
<ellipse cx="428" cy="175" rx="6" ry="10" fill="#161616"/>
<ellipse cx="427" cy="215" rx="2" ry="30" fill="#181818"/>
<ellipse cx="370" cy="378" rx="9" ry="32" fill="#1e1e1e" transform="rotate(38 370 378)"/>
<ellipse cx="435" cy="520" rx="7" ry="16" fill="#202020"/>
<ellipse cx="423" cy="395" rx="4" ry="18" fill="#2a2a2a"/>
</g>
</g>
<path d="M397 270.5 Q389 268.5 381.5 272.5" stroke="#242424" stroke-width="1" fill="none"/>
<path d="M438.6 515.4 L443.2 533.9 L438.2 532 Z" fill="url(#chk)"/>
<rect x="261" y="134.3" width="287.5" height="430.99999999999994" fill="none" stroke="#6c9ae8" stroke-width="1"/>
<rect x="258.0" y="131.3" width="6" height="6" fill="#f4f4f4" stroke="#5a8ee6" stroke-width="1"/><rect x="258.0" y="346.8" width="6" height="6" fill="#f4f4f4" stroke="#5a8ee6" stroke-width="1"/><rect x="258.0" y="562.3" width="6" height="6" fill="#f4f4f4" stroke="#5a8ee6" stroke-width="1"/><rect x="401.8" y="131.3" width="6" height="6" fill="#f4f4f4" stroke="#5a8ee6" stroke-width="1"/><rect x="401.8" y="562.3" width="6" height="6" fill="#f4f4f4" stroke="#5a8ee6" stroke-width="1"/><rect x="545.5" y="131.3" width="6" height="6" fill="#f4f4f4" stroke="#5a8ee6" stroke-width="1"/><rect x="545.5" y="346.8" width="6" height="6" fill="#f4f4f4" stroke="#5a8ee6" stroke-width="1"/><rect x="545.5" y="562.3" width="6" height="6" fill="#f4f4f4" stroke="#5a8ee6" stroke-width="1"/></svg>
<div class="a" style="left:214.7px;top:573.2px;width:379.6px;height:24.3px;background:#505050;border-radius:3px;"></div>
<div class="a" style="left:217.3px;top:575.7px;width:3px;height:19.3px;background:#d6d6d6;border-radius:1.5px;"></div>
<div class="a" style="left:224.1px;top:575.7px;width:115.6px;height:18.6px;box-sizing:border-box;border:1px solid #5c5c5c;border-radius:2px;"></div>
<svg class="a" style="left:230px;top:578.5px;" width="14" height="13" viewBox="0 0 14 13"><rect x="1.2" y="2.4" width="9.6" height="8" stroke="#7e7e7e" stroke-width="0.9" fill="none"/><path d="M1.6 10 L4.6 6.6 L6.6 8.6 L8 7.4 L10.6 10Z" fill="#7e7e7e"/><path d="M11 0.6 L11.5 2 L12.9 2.5 L11.5 3 L11 4.4 L10.5 3 L9.1 2.5 L10.5 2Z" fill="#7e7e7e"/></svg>
<div class="a t" style="left:247.7px;top:581.52px;font-size:8.6px;line-height:8.6px;color:#858585;transform:scaleX(0.9772);transform-origin:0 0;">Generate background</div>
<div class="a" style="left:343.5px;top:575.7px;width:106.6px;height:18.6px;box-sizing:border-box;border:1px solid #656565;border-radius:2px;"></div>
<svg class="a" style="left:349.5px;top:578px;" width="15" height="14" viewBox="0 0 15 14"><rect x="1.2" y="1.2" width="9.6" height="8" stroke="#e6e6e6" stroke-width="0.9" fill="none"/><path d="M1.6 8.8 L4.6 5.4 L6.6 7.4 L8 6.2 L10.6 8.8Z" fill="#e6e6e6"/><circle cx="10.6" cy="10.2" r="3.2" fill="#e6e6e6" stroke="#505050" stroke-width="0.8"/><path d="M10.6 8.4 V12 M8.8 10.2 H12.4" stroke="#505050" stroke-width="0.9"/></svg>
<div class="a t" style="left:366.8px;top:581.52px;font-size:8.6px;line-height:8.6px;color:#ececec;transform:scaleX(1.0208);transform-origin:0 0;">Import background</div>
<svg class="a" style="left:460px;top:579.5px;" width="12" height="12" viewBox="0 0 12 12"><path d="M1.2 5 L5.6 1.2 L10 5.6 L6 9.6 Q5.2 10.4 4.2 9.6 L1.4 6.8 Q0.6 5.8 1.2 5Z" fill="#e6e6e6"/><path d="M3.2 4.2 Q2.6 1.6 4.4 0.8" stroke="#e6e6e6" stroke-width="0.8" fill="none"/><path d="M10.4 6.6 Q11.4 8.4 10.6 9.6 Q9.8 10.2 9.4 9.4 Q9.2 8.4 10.4 6.6Z" fill="#e6e6e6"/></svg>
<svg class="a" style="left:490.5px;top:579.5px;" width="13" height="12" viewBox="0 0 13 12"><path d="M8.8 0.8 L4.2 6.6 L5.4 7.6Z" fill="#e6e6e6"/><path d="M3.6 7.2 Q2.2 7.4 1.8 8.8 Q1.6 10 0.8 10.6 Q3.4 11 4.4 9.4 Q5 8.4 4.6 7.9Z" fill="#e6e6e6"/><rect x="7" y="9.2" width="5" height="1" fill="#e6e6e6"/></svg>
<svg class="a" style="left:519.5px;top:579.5px;" width="13" height="12" viewBox="0 0 13 12"><path d="M8.8 0.8 L4.2 6.6 L5.4 7.6Z" fill="#e6e6e6"/><path d="M3.6 7.2 Q2.2 7.4 1.8 8.8 Q1.6 10 0.8 10.6 Q3.4 11 4.4 9.4 Q5 8.4 4.6 7.9Z" fill="#e6e6e6"/><path d="M7.2 9.7 H12 M9.6 7.3 V12" stroke="#e6e6e6" stroke-width="1"/></svg>
<svg class="a" style="left:548px;top:579.5px;" width="13" height="13" viewBox="0 0 13 13"><rect x="1" y="1" width="9.6" height="8.4" fill="#e6e6e6"/><circle cx="5.8" cy="5" r="2.1" fill="#505050"/><path d="M3 9.4 Q5.8 6.4 8.6 9.4Z" fill="#505050"/><path d="M7.6 10.2 H12 M7.6 11.8 H12" stroke="#e6e6e6" stroke-width="0.8"/><path d="M12 8.8 L12.6 10.2 L11.2 10.2Z" fill="#e6e6e6"/></svg>
<svg class="a" style="left:575.5px;top:584px;" width="11" height="4" viewBox="0 0 11 4"><g fill="#e6e6e6"><circle cx="1.6" cy="2" r="1.2"/><circle cx="5.5" cy="2" r="1.2"/><circle cx="9.4" cy="2" r="1.2"/></g></svg>
<div class="a" style="left:29px;top:636px;width:751px;height:12px;background:#474747;"></div>
<div class="a" style="left:63.6px;top:636px;width:130.8px;height:12px;background:#4f4f4f;"></div>
<div class="a" style="left:194.4px;top:636px;width:585.6px;height:12px;background:#494949;"></div>
<div class="a t" style="left:32.1px;top:638.52px;font-size:8.6px;line-height:8.6px;color:#ececec;transform:scaleX(1.0045);transform-origin:0 0;">16.67%</div>
<div class="a t" style="left:82.5px;top:638.73px;font-size:8px;line-height:8px;color:#bcbcbc;transform:scaleX(0.8814);transform-origin:0 0;">3648 px x 5472 px (72 ppi)</div>
<svg class="a" style="left:186.5px;top:639px;" width="5" height="7" viewBox="0 0 5 7"><path d="M1 0.8 L3.6 3.4 L1 6" stroke="#a0a0a0" stroke-width="0.9" fill="none"/></svg>
<svg class="a" style="left:200px;top:639px;" width="5" height="7" viewBox="0 0 5 7"><path d="M3.6 0.8 L1 3.4 L3.6 6" stroke="#7a7a7a" stroke-width="0.9" fill="none"/></svg>
<div class="a" style="left:359.4px;top:637.3px;width:255.4px;height:8.2px;background:#666666;border-radius:1px;"></div>
<svg class="a" style="left:770px;top:639px;" width="5" height="7" viewBox="0 0 5 7"><path d="M1 0.8 L3.6 3.4 L1 6" stroke="#7a7a7a" stroke-width="0.9" fill="none"/></svg>
<div class="a" style="left:781px;top:241.3px;width:9.1px;height:217.5px;background:#6a6a6a;border-radius:1px;"></div>
<svg class="a" style="left:782.5px;top:69.5px;" width="7" height="5" viewBox="0 0 7 5"><path d="M0.8 3.8 L3.4 1.2 L6 3.8" stroke="#7a7a7a" stroke-width="0.9" fill="none"/></svg>
<svg class="a" style="left:782.5px;top:626.5px;" width="7" height="5" viewBox="0 0 7 5"><path d="M0.8 1.2 L3.4 3.8 L6 1.2" stroke="#7a7a7a" stroke-width="0.9" fill="none"/></svg>
<svg class="a" style="left:1014px;top:44.8px;" width="7" height="6" viewBox="0 0 7 6"><path d="M0.8 0.8 L2.8 2.8 L0.8 4.8 M3.6 0.8 L5.6 2.8 L3.6 4.8" stroke="#cfcfcf" stroke-width="0.9" fill="none"/></svg>
<svg class="a" style="left:810px;top:44.8px;" width="7" height="6" viewBox="0 0 7 6"><path d="M2.8 0.8 L0.8 2.8 L2.8 4.8 M5.6 0.8 L3.6 2.8 L5.6 4.8" stroke="#cfcfcf" stroke-width="0.9" fill="none"/></svg>
<div class="a" style="left:822px;top:71.6px;width:202px;height:104px;background:#535353;"></div>
<div class="a" style="left:822px;top:196.7px;width:202px;height:154.5px;background:#535353;"></div>
<div class="a" style="left:822px;top:372.8px;width:202px;height:257px;background:#535353;"></div>
<div class="a" style="left:822px;top:51.2px;width:202px;height:20.4px;background:#434343;"></div>
<div class="a" style="left:822px;top:51.2px;width:29.7px;height:20.4px;background:#535353;"></div>
<div class="a" style="left:893.7px;top:53px;width:1px;height:17px;background:#3a3a3a;"></div>
<div class="a" style="left:939.4px;top:53px;width:1px;height:17px;background:#3a3a3a;"></div>
<div class="a" style="left:979.8px;top:53px;width:1px;height:17px;background:#3a3a3a;"></div>
<div class="a t" style="left:828.3px;top:56.57px;font-size:8.3px;line-height:8.3px;color:#ececec;font-weight:bold;transform:scaleX(0.8168);transform-origin:0 0;">Color</div>
<div class="a t" style="left:857.9px;top:56.57px;font-size:8.3px;line-height:8.3px;color:#a6a6a6;font-weight:bold;transform:scaleX(0.8096);transform-origin:0 0;">Swatches</div>
<div class="a t" style="left:901.7px;top:56.57px;font-size:8.3px;line-height:8.3px;color:#a6a6a6;font-weight:bold;transform:scaleX(0.8182);transform-origin:0 0;">Gradients</div>
<div class="a t" style="left:946.6px;top:56.57px;font-size:8.3px;line-height:8.3px;color:#a6a6a6;font-weight:bold;transform:scaleX(0.8189);transform-origin:0 0;">Patterns</div>
<svg class="a" style="left:1011.5px;top:59px;" width="8" height="6" viewBox="0 0 8 6"><g fill="#bdbdbd"><rect x="0.5" y="0.5" width="7" height="1"/><rect x="0.5" y="2" width="7" height="1"/><rect x="0.5" y="3.5" width="7" height="1"/><rect x="0.5" y="5" width="7" height="1"/></g></svg>
<div class="a" style="left:836.4px;top:87.3px;width:12.3px;height:12.7px;background:#000;box-shadow:0 0 0 1px #d8d8d8;"></div>
<div class="a" style="left:828.9px;top:80.4px;width:13.2px;height:13.1px;background:#fff;box-shadow:0 0 0 1px #3a3a3a;"></div>
<div class="a" style="left:852.8px;top:76.7px;width:133.2px;height:83.9px;background:linear-gradient(to top,#000 0%,rgba(0,0,0,0.86) 12%,rgba(0,0,0,0.68) 25%,rgba(0,0,0,0.42) 50%,rgba(0,0,0,0.18) 75%,rgba(0,0,0,0) 100%),linear-gradient(to right,#fff 0%,#ffc4c4 20%,#ff8a8a 45%,#ff4040 70%,#f00 100%);"></div>
<svg class="a" style="left:851px;top:75px;" width="6" height="6" viewBox="0 0 6 6"><circle cx="2.6" cy="2.6" r="2" stroke="#fff" stroke-width="0.9" fill="none"/></svg>
<div class="a" style="left:998px;top:76.8px;width:14px;height:84.2px;background:linear-gradient(to bottom,#f00 0%,#f0f 16.7%,#00f 33.3%,#0ff 50%,#0f0 66.7%,#ff0 83.3%,#f00 100%);"></div>
<svg class="a" style="left:991.5px;top:157px;" width="5" height="7" viewBox="0 0 5 7"><path d="M0.5 0.5 L4.5 3.3 L0.5 6.1Z" fill="#e8e8e8"/></svg>
<div class="a" style="left:822px;top:175.6px;width:202px;height:1.7px;background:#3c3c3c;"></div>
<div class="a" style="left:822px;top:177.3px;width:202px;height:19.4px;background:#434343;"></div>
<div class="a" style="left:822px;top:177.3px;width:47.2px;height:19.4px;background:#535353;"></div>
<div class="a" style="left:922.5px;top:177.3px;width:1px;height:19.4px;background:#3a3a3a;"></div>
<div class="a t" style="left:828.2px;top:181.87px;font-size:8.3px;line-height:8.3px;color:#ececec;font-weight:bold;transform:scaleX(0.8452);transform-origin:0 0;">Properties</div>
<div class="a t" style="left:875px;top:181.87px;font-size:8.3px;line-height:8.3px;color:#a6a6a6;font-weight:bold;transform:scaleX(0.8435);transform-origin:0 0;">Adjustments</div>
<svg class="a" style="left:1011.5px;top:184px;" width="8" height="6" viewBox="0 0 8 6"><g fill="#bdbdbd"><rect x="0.5" y="0.5" width="7" height="1"/><rect x="0.5" y="2" width="7" height="1"/><rect x="0.5" y="3.5" width="7" height="1"/><rect x="0.5" y="5" width="7" height="1"/></g></svg>
<div class="a" style="left:829.8px;top:202.2px;width:15.4px;height:15px;background:#3c3c3c;"></div>
<svg class="a" style="left:831.5px;top:204.5px;" width="12" height="10" viewBox="0 0 12 10"><rect x="0.8" y="0.8" width="10" height="8.4" stroke="#e0e0e0" stroke-width="0.9" fill="none"/><path d="M1.6 8.4 L4.6 4.6 L6.6 6.8 L8 5.6 L10 8.4Z" fill="#e0e0e0"/><circle cx="8.2" cy="2.8" r="0.9" fill="#e0e0e0"/></svg>
<svg class="a" style="left:847.5px;top:204px;" width="13" height="11" viewBox="0 0 13 11"><rect x="0.8" y="0.8" width="11.4" height="9.4" rx="1" fill="#e6e6e6"/><ellipse cx="6.5" cy="5.5" rx="3.2" ry="3" fill="#535353"/></svg>
<div class="a t" style="left:866.6px;top:206.07px;font-size:8.3px;line-height:8.3px;color:#d0d0d0;transform:scaleX(0.8183);transform-origin:0 0;">Pixel Layer</div>
<div class="a" style="left:822px;top:221px;width:189px;height:1px;background:#474747;"></div>
<svg class="a" style="left:828.0px;top:229.79999999999998px;" width="6" height="3.8" viewBox="0 0 6 3.8"><path d="M0.5 0.5 L3.0 3.3 L5.5 0.5" stroke="#b0b0b0" stroke-width="0.9" fill="none"/></svg>
<div class="a t" style="left:838.2px;top:227.57px;font-size:8.3px;line-height:8.3px;color:#e0e0e0;font-weight:bold;transform:scaleX(0.9116);transform-origin:0 0;">Transform</div>
<div class="a" style="left:828.5px;top:249px;width:16.7px;height:17.7px;background:#3c3c3c;"></div>
<svg class="a" style="left:832.5px;top:251.5px;" width="9" height="13" viewBox="0 0 9 13"><rect x="2" y="0.8" width="4.4" height="5" rx="2.2" stroke="#e0e0e0" stroke-width="1" fill="none"/><rect x="2" y="6.4" width="4.4" height="5" rx="2.2" stroke="#e0e0e0" stroke-width="1" fill="none"/></svg>
<div class="a t" style="left:853px;top:245.57px;font-size:8.3px;line-height:8.3px;color:#bdbdbd;transform:scaleX(0.8936);transform-origin:0 0;">W</div>
<div class="a" style="left:863.8px;top:243.6px;width:34.7px;height:11.1px;background:#3c3c3c;"></div>
<div class="a t" style="left:865.4px;top:245.57px;font-size:8.3px;line-height:8.3px;color:#dcdcdc;transform:scaleX(0.8667);transform-origin:0 0;">3648 px</div>
<div class="a t" style="left:919.3px;top:245.57px;font-size:8.3px;line-height:8.3px;color:#bdbdbd;transform:scaleX(0.9573);transform-origin:0 0;">X</div>
<div class="a" style="left:926.3px;top:243.6px;width:34.1px;height:11.1px;background:#3c3c3c;"></div>
<div class="a t" style="left:927.7px;top:245.57px;font-size:8.3px;line-height:8.3px;color:#dcdcdc;transform:scaleX(0.9243);transform-origin:0 0;">0 px</div>
<div class="a t" style="left:853px;top:263.07px;font-size:8.3px;line-height:8.3px;color:#bdbdbd;transform:scaleX(0.9342);transform-origin:0 0;">H</div>
<div class="a" style="left:863.8px;top:261.1px;width:34.7px;height:11.1px;background:#3c3c3c;"></div>
<div class="a t" style="left:865.4px;top:263.07px;font-size:8.3px;line-height:8.3px;color:#dcdcdc;transform:scaleX(0.8667);transform-origin:0 0;">5472 px</div>
<div class="a t" style="left:919.3px;top:263.07px;font-size:8.3px;line-height:8.3px;color:#bdbdbd;transform:scaleX(0.9573);transform-origin:0 0;">Y</div>
<div class="a" style="left:926.3px;top:261.1px;width:34.1px;height:11.1px;background:#3c3c3c;"></div>
<div class="a t" style="left:927.7px;top:263.07px;font-size:8.3px;line-height:8.3px;color:#dcdcdc;transform:scaleX(0.9243);transform-origin:0 0;">0 px</div>
<svg class="a" style="left:849px;top:282px;" width="12" height="10" viewBox="0 0 12 10"><path d="M10.6 8.6 H1 L8.6 1.4" stroke="#cfcfcf" stroke-width="0.9" fill="none"/><path d="M5.6 4.2 Q7.6 6 7.4 8.6" stroke="#cfcfcf" stroke-width="0.8" fill="none"/></svg>
<div class="a" style="left:863.8px;top:282px;width:24.4px;height:10.2px;background:#3c3c3c;"></div>
<div class="a" style="left:888.8px;top:282px;width:9.7px;height:10.2px;background:#3c3c3c;"></div>
<div class="a t" style="left:865.4px;top:283.47px;font-size:8.3px;line-height:8.3px;color:#dcdcdc;transform:scaleX(0.9911);transform-origin:0 0;">0.00°</div>
<svg class="a" style="left:891.1px;top:285.79999999999995px;" width="5" height="3.2" viewBox="0 0 5 3.2"><path d="M0.5 0.5 L2.5 2.7 L4.5 0.5" stroke="#a0a0a0" stroke-width="0.8" fill="none"/></svg>
<svg class="a" style="left:924.5px;top:282px;" width="14" height="11" viewBox="0 0 14 11"><path d="M1 1.4 L5.6 5.3 L1 9.2Z" stroke="#d8d8d8" stroke-width="0.8" fill="none"/><path d="M12.4 1.4 L7.8 5.3 L12.4 9.2Z" fill="#e0e0e0"/><path d="M6.7 0.6 V10" stroke="#d8d8d8" stroke-width="0.6" stroke-dasharray="1 1"/></svg>
<svg class="a" style="left:945.5px;top:281px;" width="12" height="13" viewBox="0 0 12 13"><path d="M1.4 1 L5.8 5.4 L10.2 1Z" stroke="#d8d8d8" stroke-width="0.8" fill="none"/><path d="M1.4 11.6 L5.8 7.2 L10.2 11.6Z" fill="#e0e0e0"/><path d="M0.5 6.3 H11" stroke="#d8d8d8" stroke-width="0.6" stroke-dasharray="1 1"/></svg>
<div class="a" style="left:822px;top:303px;width:189px;height:1px;background:#474747;"></div>
<svg class="a" style="left:828.0px;top:313.1px;" width="6" height="3.8" viewBox="0 0 6 3.8"><path d="M0.5 0.5 L3.0 3.3 L5.5 0.5" stroke="#b0b0b0" stroke-width="0.9" fill="none"/></svg>
<div class="a t" style="left:838.2px;top:310.87px;font-size:8.3px;line-height:8.3px;color:#e0e0e0;font-weight:bold;transform:scaleX(0.9156);transform-origin:0 0;">Align and Distribute</div>
<div class="a t" style="left:827.7px;top:326.37px;font-size:8.3px;line-height:8.3px;color:#bdbdbd;transform:scaleX(0.8428);transform-origin:0 0;">Align:</div>
<div class="a" style="left:1011.8px;top:224px;width:9.8px;height:110px;background:#4a4a4a;"></div>
<div class="a" style="left:1013.5px;top:233.9px;width:6.4px;height:38.9px;background:#6e6e6e;border-radius:1px;"></div>
<svg class="a" style="left:1014px;top:226px;" width="6" height="4" viewBox="0 0 6 4"><path d="M0.6 3.2 L2.8 1 L5 3.2" stroke="#7a7a7a" stroke-width="0.8" fill="none"/></svg>
<svg class="a" style="left:1014px;top:325px;" width="6" height="4" viewBox="0 0 6 4"><path d="M0.6 1 L2.8 3.2 L5 1" stroke="#7a7a7a" stroke-width="0.8" fill="none"/></svg>
<div class="a" style="left:822px;top:351.2px;width:202px;height:2.2px;background:#3c3c3c;"></div>
<div class="a" style="left:822px;top:353.4px;width:202px;height:19.4px;background:#434343;"></div>
<div class="a" style="left:822px;top:353.4px;width:32.9px;height:19.4px;background:#535353;"></div>
<div class="a" style="left:897.1px;top:353.4px;width:1px;height:19.4px;background:#3a3a3a;"></div>
<div class="a" style="left:928.2px;top:353.4px;width:1px;height:19.4px;background:#3a3a3a;"></div>
<div class="a t" style="left:827.9px;top:358.07px;font-size:8.3px;line-height:8.3px;color:#ececec;font-weight:bold;transform:scaleX(0.8070);transform-origin:0 0;">Layers</div>
<div class="a t" style="left:861.4px;top:358.07px;font-size:8.3px;line-height:8.3px;color:#a6a6a6;font-weight:bold;transform:scaleX(0.8191);transform-origin:0 0;">Channels</div>
<div class="a t" style="left:904.6px;top:358.07px;font-size:8.3px;line-height:8.3px;color:#a6a6a6;font-weight:bold;transform:scaleX(0.7919);transform-origin:0 0;">Paths</div>
<svg class="a" style="left:1011.5px;top:360px;" width="8" height="6" viewBox="0 0 8 6"><g fill="#bdbdbd"><rect x="0.5" y="0.5" width="7" height="1"/><rect x="0.5" y="2" width="7" height="1"/><rect x="0.5" y="3.5" width="7" height="1"/><rect x="0.5" y="5" width="7" height="1"/></g></svg>
<div class="a" style="left:825px;top:381px;width:60.1px;height:12.6px;background:#3c3c3c;"></div>
<svg class="a" style="left:829px;top:382.5px;" width="10" height="10" viewBox="0 0 10 10"><circle cx="4" cy="4" r="2.8" stroke="#e0e0e0" stroke-width="1" fill="none"/><path d="M6 6 L8.8 8.8" stroke="#e0e0e0" stroke-width="1.3"/></svg>
<div class="a t" style="left:839.8px;top:383.07px;font-size:8.3px;line-height:8.3px;color:#d8d8d8;transform:scaleX(0.8427);transform-origin:0 0;">Kind</div>
<svg class="a" style="left:878.3px;top:386.4px;" width="5" height="3.2" viewBox="0 0 5 3.2"><path d="M0.5 0.5 L2.5 2.7 L4.5 0.5" stroke="#a0a0a0" stroke-width="0.8" fill="none"/></svg>
<svg class="a" style="left:893.5px;top:380.5px;" width="11" height="11" viewBox="0 0 11 11"><rect x="0.8" y="1" width="9.2" height="8.4" stroke="#dcdcdc" stroke-width="0.9" fill="none"/><path d="M1.6 8.6 L4.2 5 L6.2 7 L7.4 6 L9.2 8.6Z" fill="#dcdcdc"/></svg>
<svg class="a" style="left:910.5px;top:380.5px;" width="11" height="11" viewBox="0 0 11 11"><circle cx="5.3" cy="5.3" r="4.2" stroke="#dcdcdc" stroke-width="1" fill="none"/><path d="M2.3 8.3 L8.3 2.3 A4.2 4.2 0 0 1 2.3 8.3Z" fill="#dcdcdc"/></svg>
<svg class="a" style="left:928px;top:380.5px;" width="10" height="11" viewBox="0 0 10 11"><path d="M1 1.6 H8.6 M1.3 1.2 V3.2 M8.3 1.2 V3.2 M4.8 1.6 V9.4 M3 9.4 H6.6" stroke="#dcdcdc" stroke-width="1.3" fill="none"/></svg>
<svg class="a" style="left:945px;top:380.5px;" width="10" height="11" viewBox="0 0 10 11"><rect x="1.8" y="1.8" width="6.4" height="6.8" stroke="#dcdcdc" stroke-width="0.9" fill="none"/><g fill="#dcdcdc"><rect x="0.5" y="0.5" width="2.6" height="2.6"/><rect x="6.9" y="0.5" width="2.6" height="2.6"/><rect x="0.5" y="7.3" width="2.6" height="2.6"/><rect x="6.9" y="7.3" width="2.6" height="2.6"/></g></svg>
<svg class="a" style="left:962.5px;top:380.5px;" width="10" height="11" viewBox="0 0 10 11"><path d="M1 5 H6 V10 H1Z" fill="#dcdcdc"/><path d="M3 5 V2.8 Q3 1 4.6 1 Q6.2 1 6.2 2.8" stroke="#dcdcdc" stroke-width="0.9" fill="none"/><path d="M6.5 3 H8.8 V10 H6.5" stroke="#dcdcdc" stroke-width="0.9" fill="none"/></svg>
<svg class="a" style="left:979px;top:378.5px;" width="9" height="15" viewBox="0 0 9 15"><rect x="1.8" y="5" width="5" height="9" rx="2.5" fill="#3c3c3c"/><circle cx="4.3" cy="4.5" r="3" fill="#f0f0f0"/></svg>
<div class="a" style="left:822px;top:396px;width:202px;height:0.8px;background:#4a4a4a;"></div>
<div class="a" style="left:825px;top:400.9px;width:92.5px;height:12.5px;background:#3c3c3c;"></div>
<div class="a t" style="left:830px;top:403.07px;font-size:8.3px;line-height:8.3px;color:#d8d8d8;transform:scaleX(0.8636);transform-origin:0 0;">Normal</div>
<svg class="a" style="left:910.5px;top:405.9px;" width="5" height="3.2" viewBox="0 0 5 3.2"><path d="M0.5 0.5 L2.5 2.7 L4.5 0.5" stroke="#a0a0a0" stroke-width="0.8" fill="none"/></svg>
<div class="a t" style="left:923.3px;top:403.07px;font-size:8.3px;line-height:8.3px;color:#bdbdbd;transform:scaleX(0.8737);transform-origin:0 0;">Opacity:</div>
<div class="a" style="left:953.1px;top:400.9px;width:21.6px;height:12.5px;background:#3c3c3c;"></div>
<div class="a" style="left:975.2px;top:400.9px;width:9.7px;height:12.5px;background:#404040;"></div>
<div class="a t" style="left:954.9px;top:403.07px;font-size:8.3px;line-height:8.3px;color:#dcdcdc;transform:scaleX(0.8620);transform-origin:0 0;">100%</div>
<svg class="a" style="left:977.5px;top:405.7px;" width="5" height="3.2" viewBox="0 0 5 3.2"><path d="M0.5 0.5 L2.5 2.7 L4.5 0.5" stroke="#a0a0a0" stroke-width="0.8" fill="none"/></svg>
<div class="a" style="left:822px;top:415.6px;width:202px;height:0.8px;background:#4a4a4a;"></div>
<div class="a t" style="left:825.7px;top:421.77px;font-size:8.3px;line-height:8.3px;color:#bdbdbd;transform:scaleX(0.8922);transform-origin:0 0;">Lock:</div>
<svg class="a" style="left:848.3px;top:421.5px;" width="10" height="10" viewBox="0 0 10 10"><rect x="0.6" y="0.6" width="8.6" height="8.6" fill="#535353" stroke="#dcdcdc" stroke-width="0.9"/><g fill="#dcdcdc"><rect x="1" y="1" width="2.6" height="2.6"/><rect x="6.2" y="1" width="2.6" height="2.6"/><rect x="3.6" y="3.6" width="2.6" height="2.6"/><rect x="1" y="6.2" width="2.6" height="2.6"/><rect x="6.2" y="6.2" width="2.6" height="2.6"/></g></svg>
<svg class="a" style="left:864px;top:421px;" width="10" height="11" viewBox="0 0 10 11"><path d="M9.4 0.6 L4.6 6 L5.8 7Z" fill="#dcdcdc"/><path d="M4 6.6 Q2.6 6.8 2.2 8.2 Q2 9.4 1 10.2 Q3.8 10.6 4.8 8.9 Q5.4 7.9 5 7.3Z" fill="#dcdcdc"/></svg>
<svg class="a" style="left:879.2px;top:421px;" width="11" height="11" viewBox="0 0 11 11"><g fill="#dcdcdc"><rect x="5" y="1.8" width="1" height="7.6"/><rect x="1.8" y="5" width="7.6" height="1"/><path d="M5.5 0.4 L7.2 2.4 L3.8 2.4Z M5.5 10.6 L7.2 8.6 L3.8 8.6Z M0.4 5.5 L2.4 3.8 L2.4 7.2Z M10.6 5.5 L8.6 3.8 L8.6 7.2Z"/></g></svg>
<svg class="a" style="left:894.5px;top:421px;" width="11" height="11" viewBox="0 0 11 11"><rect x="2.6" y="2.6" width="6" height="6" stroke="#dcdcdc" stroke-width="0.9" fill="none"/><path d="M2.6 0.4 V2.6 H0.4 M8.6 10.6 V8.6 H10.6" stroke="#dcdcdc" stroke-width="0.9" fill="none"/><path d="M7 0.8 L9.8 0.8 L9.8 3.6" stroke="#dcdcdc" stroke-width="0.7" fill="none"/></svg>
<svg class="a" style="left:911.2px;top:420.5px;" width="10" height="11" viewBox="0 0 10 11"><path d="M2.6 5 V3.2 Q2.6 0.8 5 0.8 Q7.4 0.8 7.4 3.2 V5" stroke="#dcdcdc" stroke-width="1.1" fill="none"/><rect x="1.2" y="5" width="7.6" height="5.4" fill="#dcdcdc"/><rect x="4.5" y="6.6" width="1" height="2" fill="#535353"/></svg>
<div class="a t" style="left:939.5px;top:421.77px;font-size:8.3px;line-height:8.3px;color:#bdbdbd;transform:scaleX(0.8057);transform-origin:0 0;">Fill:</div>
<div class="a" style="left:953.1px;top:421.4px;width:21.6px;height:9.2px;background:#3c3c3c;"></div>
<div class="a" style="left:975.2px;top:421.4px;width:9.7px;height:9.2px;background:#404040;"></div>
<div class="a t" style="left:954.9px;top:422.17px;font-size:8.3px;line-height:8.3px;color:#dcdcdc;transform:scaleX(0.8620);transform-origin:0 0;">100%</div>
<svg class="a" style="left:977.5px;top:424.59999999999997px;" width="5" height="3.2" viewBox="0 0 5 3.2"><path d="M0.5 0.5 L2.5 2.7 L4.5 0.5" stroke="#a0a0a0" stroke-width="0.8" fill="none"/></svg>
<div class="a" style="left:822px;top:436.8px;width:202px;height:193px;background:#4f4f4f;"></div>
<div class="a" style="left:843px;top:437.2px;width:168.7px;height:28.6px;background:#6a6a6a;"></div>
<div class="a" style="left:843px;top:437.2px;width:168.7px;height:28.6px;background:repeating-conic-gradient(#6e6e6e 0 25%,#666 0 50%) 0 0/2px 2px;opacity:0.6"></div>
<div class="a" style="left:1023px;top:436.8px;width:1px;height:193px;background:#3e3e3e;"></div>
<svg class="a" style="left:827px;top:448px;" width="12" height="8" viewBox="0 0 12 8"><path d="M0.8 4 Q6 -1.4 11.2 4 Q6 9.4 0.8 4Z" fill="#e8e8e8"/><circle cx="6" cy="4" r="1.7" fill="#4f4f4f"/></svg>
<svg class="a" style="left:845.8px;top:440.4px" width="15.6" height="22.7" viewBox="261 134.3 287.5 431" preserveAspectRatio="none"><defs><linearGradient id="th1" x1="0" y1="0" x2="0.4" y2="1"><stop offset="0" stop-color="#a8a8a8"/><stop offset="0.6" stop-color="#8a8a8a"/><stop offset="1" stop-color="#5a5a5a"/></linearGradient></defs><rect x="261" y="134.3" width="287.5" height="431" fill="url(#th1)"/><ellipse cx="380" cy="520" rx="120" ry="22" fill="#3a3a3a" opacity="0.8"/><path d="M425.4 163.8 Q428.1 162.7 431.6 164.6 Q435.1 166.6 435.5 169.3 Q435.9 172.0 434.7 174.3 Q433.5 176.6 432.0 179.3 Q430.5 182.0 430.9 187.8 Q431.4 193.6 433.4 203.6 Q435.5 213.6 437.0 220.6 Q438.5 227.5 439.6 234.4 Q440.7 241.4 441.2 248.2 Q441.8 255.0 442.0 269.3 Q442.2 283.6 442.9 293.6 Q443.7 303.7 446.4 308.4 Q449.1 313.0 452.4 318.5 Q455.6 324.0 457.5 328.6 Q459.3 333.3 461.1 339.8 Q463.0 346.3 464.9 353.7 Q466.7 361.1 468.5 368.5 Q470.4 375.9 472.2 382.4 Q474.0 388.9 474.9 393.5 Q475.9 398.1 476.4 404.6 Q476.9 411.1 477.0 418.2 Q477.1 425.4 477.1 433.1 Q477.1 440.9 476.4 448.6 Q475.6 456.3 473.6 461.0 Q471.7 465.6 468.6 471.0 Q465.6 476.4 463.2 481.8 Q460.9 487.2 458.6 491.8 Q456.3 496.4 455.8 500.4 Q455.3 504.3 455.1 508.9 Q454.8 513.5 455.2 519.5 Q455.7 525.6 456.6 529.8 Q457.6 533.9 459.5 536.2 Q461.3 538.5 462.7 539.9 Q464.1 541.3 463.6 542.7 Q463.1 544.1 460.8 545.2 Q458.5 546.4 455.2 546.1 Q452.0 545.9 448.8 545.0 Q445.6 544.1 442.4 542.2 Q439.1 540.4 436.3 538.5 Q433.5 536.7 430.2 535.8 Q427.0 534.8 425.1 532.5 Q423.3 530.2 423.1 527.4 Q422.9 524.6 424.5 521.4 Q426.1 518.1 428.0 513.5 Q429.8 508.9 431.2 503.8 Q432.6 498.7 434.9 497.3 Q437.2 495.9 438.6 494.6 Q440.1 493.3 440.9 488.7 Q441.6 484.1 442.4 479.5 Q443.2 474.8 444.4 471.7 Q445.5 468.6 444.4 464.8 Q443.2 460.9 438.9 453.9 Q434.7 447.0 430.0 439.3 Q425.4 431.6 422.7 425.5 Q420.0 419.3 418.9 414.6 Q417.7 410.0 418.1 405.0 Q418.5 400.0 419.4 394.4 Q420.4 388.9 420.9 383.4 Q421.3 377.8 419.9 372.4 Q418.5 367.0 416.6 363.1 Q414.8 359.3 413.6 356.6 Q412.5 354.0 409.9 352.0 Q407.4 350.0 405.5 346.7 Q403.6 343.4 401.9 342.5 Q400.1 341.6 398.4 343.4 Q396.6 345.2 393.9 350.5 Q391.2 355.8 387.6 362.0 Q384.1 368.2 380.6 373.5 Q377.0 378.9 371.7 385.1 Q366.4 391.3 361.5 396.6 Q356.6 401.9 355.8 406.4 Q354.9 410.8 354.4 414.4 Q354.0 417.9 352.6 420.1 Q351.3 422.3 349.6 423.2 Q347.8 424.1 346.0 422.8 Q344.2 421.5 343.3 417.9 Q342.4 414.4 343.3 410.9 Q344.2 407.3 346.9 402.9 Q349.5 398.4 352.6 393.9 Q355.7 389.5 359.2 384.2 Q362.8 378.9 366.8 373.5 Q370.8 368.2 374.8 362.0 Q378.8 355.8 380.6 351.4 Q382.4 346.9 382.8 342.5 Q383.2 338.1 384.5 333.6 Q385.9 329.2 388.5 325.6 Q391.2 322.1 392.4 320.6 Q393.5 319.1 396.8 318.1 Q400.0 317.0 398.9 313.1 Q397.8 309.3 396.6 305.0 Q395.3 300.6 394.1 296.3 Q392.8 292.0 392.2 288.3 Q391.6 284.6 389.8 282.7 Q387.9 280.8 385.7 278.7 Q383.5 276.6 386.3 274.7 Q389.1 272.8 392.2 271.6 Q395.3 270.3 399.0 269.1 Q402.7 267.9 400.4 263.7 Q398.0 259.5 399.2 256.6 Q400.5 253.8 403.5 252.7 Q406.5 251.5 409.5 252.2 Q412.5 253.0 414.0 255.5 Q415.5 258.0 415.0 261.5 Q414.5 265.0 412.6 267.1 Q410.8 269.1 413.6 270.4 Q416.3 271.6 418.8 273.8 Q421.3 275.9 422.5 278.4 Q423.7 280.8 424.6 279.0 Q425.6 277.1 426.6 268.8 Q427.5 260.4 427.9 252.7 Q428.3 245.0 428.2 240.1 Q428.1 235.2 427.0 225.9 Q425.8 216.7 425.4 209.0 Q425.0 201.3 425.0 194.8 Q425.0 188.2 423.9 183.9 Q422.7 179.7 421.5 177.3 Q420.4 175.0 421.5 170.0 Q422.7 165.0 425.4 163.8Z" fill="#262626"/><rect x="261" y="134.3" width="287.5" height="431" fill="none" stroke="#444" stroke-width="14"/></svg>
<svg class="a" style="left:862.5px;top:445px;" width="7" height="13" viewBox="0 0 7 13"><rect x="1.3" y="0.8" width="4" height="5.2" rx="2" stroke="#cfcfcf" stroke-width="0.9" fill="none"/><rect x="1.3" y="6.4" width="4" height="5.2" rx="2" stroke="#cfcfcf" stroke-width="0.9" fill="none"/></svg>
<div class="a" style="left:870px;top:438.9px;width:19px;height:25.9px;background:#000;box-sizing:border-box;border:1.2px solid #e6e6e6;"></div>
<svg class="a" style="left:871.2px;top:440.1px" width="16.6" height="23.5" viewBox="261 134.3 287.5 431" preserveAspectRatio="none"><path d="M425.4 163.8 Q428.1 162.7 431.6 164.6 Q435.1 166.6 435.5 169.3 Q435.9 172.0 434.7 174.3 Q433.5 176.6 432.0 179.3 Q430.5 182.0 430.9 187.8 Q431.4 193.6 433.4 203.6 Q435.5 213.6 437.0 220.6 Q438.5 227.5 439.6 234.4 Q440.7 241.4 441.2 248.2 Q441.8 255.0 442.0 269.3 Q442.2 283.6 442.9 293.6 Q443.7 303.7 446.4 308.4 Q449.1 313.0 452.4 318.5 Q455.6 324.0 457.5 328.6 Q459.3 333.3 461.1 339.8 Q463.0 346.3 464.9 353.7 Q466.7 361.1 468.5 368.5 Q470.4 375.9 472.2 382.4 Q474.0 388.9 474.9 393.5 Q475.9 398.1 476.4 404.6 Q476.9 411.1 477.0 418.2 Q477.1 425.4 477.1 433.1 Q477.1 440.9 476.4 448.6 Q475.6 456.3 473.6 461.0 Q471.7 465.6 468.6 471.0 Q465.6 476.4 463.2 481.8 Q460.9 487.2 458.6 491.8 Q456.3 496.4 455.8 500.4 Q455.3 504.3 455.1 508.9 Q454.8 513.5 455.2 519.5 Q455.7 525.6 456.6 529.8 Q457.6 533.9 459.5 536.2 Q461.3 538.5 462.7 539.9 Q464.1 541.3 463.6 542.7 Q463.1 544.1 460.8 545.2 Q458.5 546.4 455.2 546.1 Q452.0 545.9 448.8 545.0 Q445.6 544.1 442.4 542.2 Q439.1 540.4 436.3 538.5 Q433.5 536.7 430.2 535.8 Q427.0 534.8 425.1 532.5 Q423.3 530.2 423.1 527.4 Q422.9 524.6 424.5 521.4 Q426.1 518.1 428.0 513.5 Q429.8 508.9 431.2 503.8 Q432.6 498.7 434.9 497.3 Q437.2 495.9 438.6 494.6 Q440.1 493.3 440.9 488.7 Q441.6 484.1 442.4 479.5 Q443.2 474.8 444.4 471.7 Q445.5 468.6 444.4 464.8 Q443.2 460.9 438.9 453.9 Q434.7 447.0 430.0 439.3 Q425.4 431.6 422.7 425.5 Q420.0 419.3 418.9 414.6 Q417.7 410.0 418.1 405.0 Q418.5 400.0 419.4 394.4 Q420.4 388.9 420.9 383.4 Q421.3 377.8 419.9 372.4 Q418.5 367.0 416.6 363.1 Q414.8 359.3 413.6 356.6 Q412.5 354.0 409.9 352.0 Q407.4 350.0 405.5 346.7 Q403.6 343.4 401.9 342.5 Q400.1 341.6 398.4 343.4 Q396.6 345.2 393.9 350.5 Q391.2 355.8 387.6 362.0 Q384.1 368.2 380.6 373.5 Q377.0 378.9 371.7 385.1 Q366.4 391.3 361.5 396.6 Q356.6 401.9 355.8 406.4 Q354.9 410.8 354.4 414.4 Q354.0 417.9 352.6 420.1 Q351.3 422.3 349.6 423.2 Q347.8 424.1 346.0 422.8 Q344.2 421.5 343.3 417.9 Q342.4 414.4 343.3 410.9 Q344.2 407.3 346.9 402.9 Q349.5 398.4 352.6 393.9 Q355.7 389.5 359.2 384.2 Q362.8 378.9 366.8 373.5 Q370.8 368.2 374.8 362.0 Q378.8 355.8 380.6 351.4 Q382.4 346.9 382.8 342.5 Q383.2 338.1 384.5 333.6 Q385.9 329.2 388.5 325.6 Q391.2 322.1 392.4 320.6 Q393.5 319.1 396.8 318.1 Q400.0 317.0 398.9 313.1 Q397.8 309.3 396.6 305.0 Q395.3 300.6 394.1 296.3 Q392.8 292.0 392.2 288.3 Q391.6 284.6 389.8 282.7 Q387.9 280.8 385.7 278.7 Q383.5 276.6 386.3 274.7 Q389.1 272.8 392.2 271.6 Q395.3 270.3 399.0 269.1 Q402.7 267.9 400.4 263.7 Q398.0 259.5 399.2 256.6 Q400.5 253.8 403.5 252.7 Q406.5 251.5 409.5 252.2 Q412.5 253.0 414.0 255.5 Q415.5 258.0 415.0 261.5 Q414.5 265.0 412.6 267.1 Q410.8 269.1 413.6 270.4 Q416.3 271.6 418.8 273.8 Q421.3 275.9 422.5 278.4 Q423.7 280.8 424.6 279.0 Q425.6 277.1 426.6 268.8 Q427.5 260.4 427.9 252.7 Q428.3 245.0 428.2 240.1 Q428.1 235.2 427.0 225.9 Q425.8 216.7 425.4 209.0 Q425.0 201.3 425.0 194.8 Q425.0 188.2 423.9 183.9 Q422.7 179.7 421.5 177.3 Q420.4 175.0 421.5 170.0 Q422.7 165.0 425.4 163.8Z" fill="#f4f4f4" stroke="#f4f4f4" stroke-width="2"/></svg>
<div class="a t" style="left:894.2px;top:447.77px;font-size:8.3px;line-height:8.3px;color:#e0e0e0;transform:scaleX(0.8813);transform-origin:0 0;">Layer 0</div>
<div class="a" style="left:822px;top:629.7px;width:202px;height:18.3px;background:#535353;"></div>
<svg class="a" style="left:877.5px;top:634.5px;" width="12" height="8" viewBox="0 0 12 8"><rect x="0.8" y="1.4" width="5.6" height="4.8" rx="2.4" stroke="#9a9a9a" stroke-width="0.9" fill="none"/><rect x="5" y="1.4" width="5.6" height="4.8" rx="2.4" stroke="#9a9a9a" stroke-width="0.9" fill="none"/></svg>
<div class="a t" style="left:898.6px;top:634.26px;font-size:9.5px;line-height:9.5px;color:#bdbdbd;font-style:italic;">fx</div>
<svg class="a" style="left:907.5px;top:641.5px;" width="3" height="2" viewBox="0 0 3 2"><path d="M0 0 H2.6 L1.3 1.4Z" fill="#bdbdbd"/></svg>
<svg class="a" style="left:916.8px;top:633.5px;" width="11" height="10" viewBox="0 0 11 10"><rect x="0.5" y="0.5" width="10" height="8.6" fill="#bdbdbd"/><circle cx="5.5" cy="4.8" r="2.7" fill="#535353"/></svg>
<svg class="a" style="left:936.8px;top:633px;" width="13" height="12" viewBox="0 0 13 12"><circle cx="5.3" cy="5.3" r="4.3" stroke="#bdbdbd" stroke-width="1" fill="none"/><path d="M2.3 8.3 L8.3 2.3 A4.3 4.3 0 0 1 2.3 8.3Z" fill="#bdbdbd"/><path d="M9.6 9.6 H12.4 L11 11Z" fill="#bdbdbd"/></svg>
<svg class="a" style="left:955.8px;top:633.5px;" width="10" height="10" viewBox="0 0 10 10"><path d="M0.6 1.2 H4 L5 2.4 H9.4 V9 H0.6Z" fill="#bdbdbd"/></svg>
<svg class="a" style="left:975px;top:633px;" width="10" height="11" viewBox="0 0 10 11"><rect x="0.9" y="0.9" width="8.2" height="9" stroke="#bdbdbd" stroke-width="0.9" fill="none"/><path d="M5 3 V8 M2.5 5.5 H7.5" stroke="#bdbdbd" stroke-width="1"/></svg>
<svg class="a" style="left:994px;top:633px;" width="10" height="11" viewBox="0 0 10 11"><rect x="0.5" y="1.2" width="9" height="1.3" fill="#bdbdbd"/><rect x="3.5" y="0" width="3" height="1.5" fill="#bdbdbd"/><path d="M1.4 3 H8.6 L8 10.4 H2Z" fill="#bdbdbd"/><path d="M3.6 4.2 V9.2 M5 4.2 V9.2 M6.4 4.2 V9.2" stroke="#535353" stroke-width="0.6"/></svg>
<div class="a" style="left:793px;top:52px;width:27px;height:596px;background:#535353;"></div>
<div class="a" style="left:793px;top:79.8px;width:27px;height:1.7px;background:#3e3e3e;"></div>
<div class="a" style="left:793px;top:129.2px;width:27px;height:1.7px;background:#3e3e3e;"></div>
<div class="a" style="left:799px;top:56px;width:14px;height:1px;background:repeating-linear-gradient(90deg,#5e5e5e 0 1px,transparent 1px 2px);"></div>
<svg class="a" style="left:799.5px;top:61.5px;" width="14" height="15" viewBox="0 0 14 15"><g fill="none" stroke="#d8d8d8" stroke-width="0.9"><rect x="1.7" y="1.4" width="3.4" height="3.4"/><rect x="1.7" y="6" width="3.4" height="3.4"/></g><rect x="1.3" y="10" width="4.2" height="4" fill="#d8d8d8"/><path d="M8.4 3.4 Q12.4 5 11.4 9.6 Q10.8 11.6 8.6 13.4" stroke="#d8d8d8" stroke-width="1.2" fill="none"/><path d="M7 2.2 L10.4 2.4 L8.2 5.6Z" fill="#d8d8d8"/></svg>
<div class="a" style="left:799px;top:84.5px;width:14px;height:1px;background:repeating-linear-gradient(90deg,#5e5e5e 0 1px,transparent 1px 2px);"></div>
<svg class="a" style="left:799px;top:90px;" width="16" height="14" viewBox="0 0 16 14"><g fill="#d8d8d8"><rect x="0.6" y="1" width="1.4" height="1.3"/><rect x="2.6" y="1" width="3" height="1.3"/><rect x="0.6" y="3.4" width="1.4" height="1.3"/><rect x="2.6" y="3.4" width="3" height="1.3"/><rect x="0.6" y="5.8" width="1.4" height="1.3"/><rect x="2.6" y="5.8" width="3" height="1.3"/></g><path d="M14.6 1.6 L8.4 8.6 L9.8 9.8Z" fill="#d8d8d8"/><path d="M7.6 9 Q5.8 9.4 5.4 11 Q5 12.4 3.8 13 Q7 13.6 8.4 11.6 Q9.2 10.6 8.8 9.8Z" fill="#d8d8d8"/></svg>
<svg class="a" style="left:797.5px;top:110px;" width="17" height="15" viewBox="0 0 17 15"><path d="M1.2 4.6 Q1.6 2.4 4.6 2.4 Q7.6 2.4 8.8 4 H15.8 V5.2 H8.8 Q7.6 6.8 4.6 6.8 Q1.6 6.8 1.2 4.6Z" fill="#d8d8d8"/><path d="M3 9.4 H9 L13.4 6.6 Q16.4 9.8 13.4 13.2 L9 10.6 H3Z" fill="#d8d8d8"/></svg>
</body></html>
